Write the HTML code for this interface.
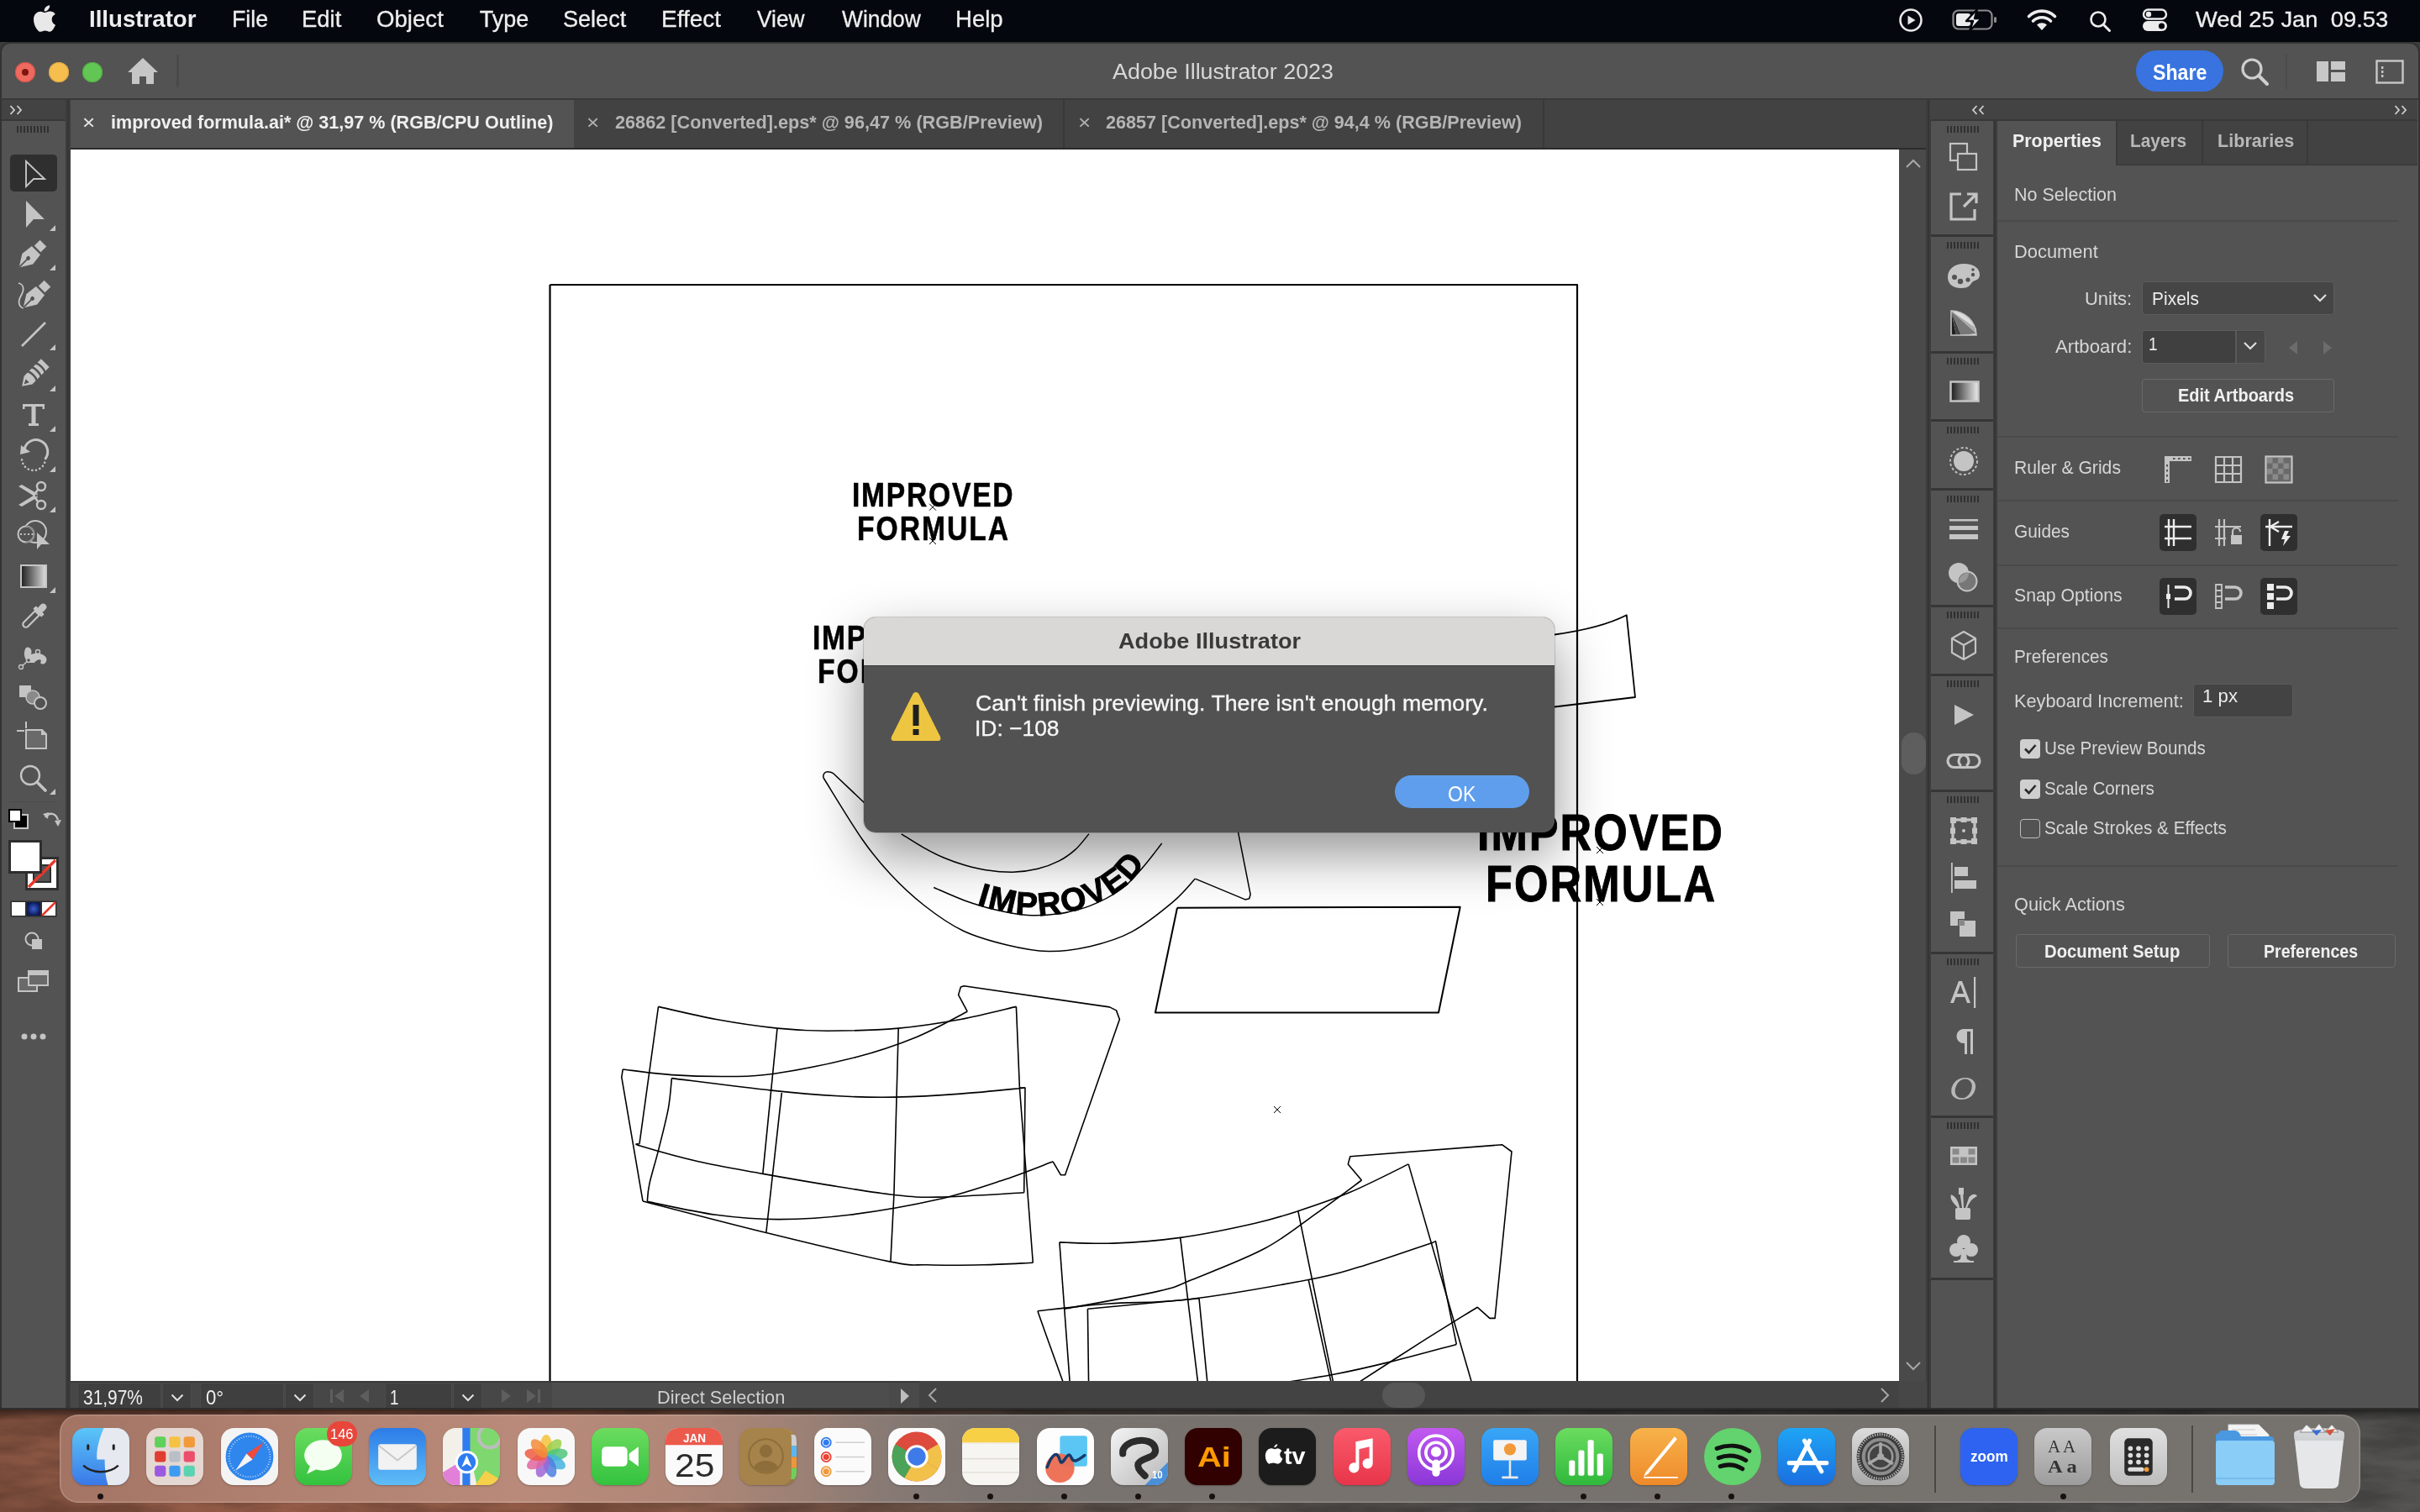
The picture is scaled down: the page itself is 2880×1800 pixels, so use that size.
<!DOCTYPE html>
<html><head><meta charset="utf-8">
<style>
*{margin:0;padding:0;box-sizing:border-box;}
html,body{width:2880px;height:1800px;overflow:hidden;}
body{position:relative;font-family:"Liberation Sans",sans-serif;background:#3c3c3c;}
.a{position:absolute;}
.t{position:absolute;white-space:pre;line-height:1;}
svg{position:absolute;overflow:visible;}

</style></head><body>
<div class="a" style="left:0;top:1590px;width:2880px;height:210px;background:linear-gradient(90deg,#6a4233 0%,#7a4b3b 12%,#704636 25%,#5a4237 35%,#4a423d 46%,#403e3c 60%,#3c3b3a 80%,#444342 100%)"></div>
<svg style="left:0;top:1590px;mix-blend-mode:overlay;opacity:0.55" width="2880" height="210"><filter id="wn" x="0" y="0" width="100%" height="100%"><feTurbulence type="fractalNoise" baseFrequency="0.012 0.05" numOctaves="4" seed="7"/><feColorMatrix type="matrix" values="0 0 0 0 0.5  0 0 0 0 0.5  0 0 0 0 0.5  2.2 0 0 0 -0.6"/></filter><rect width="2880" height="210" filter="url(#wn)"/></svg>
<div class="a" style="left:0px;top:0px;width:2880px;height:50px;background:#05070f;"></div>
<svg style="left:40px;top:6px" width="26" height="32" viewBox="16 12 139 173" preserveAspectRatio="none"><path fill="#e8e8e8" d="M150.4 72.3c-1 .8-18.3 10.5-18.3 32.3 0 25.2 22.1 34.1 22.8 34.3-.1.5-3.5 12.2-11.7 24.1-7.3 10.5-14.9 21-26.5 21s-14.6-6.7-28-6.7c-13.1 0-17.7 7-28.3 7s-18-9.7-26.5-21.6C24.1 149.1 16 126.8 16 105.7c0-34 22.1-52 43.8-52 11.6 0 21.2 7.6 28.4 7.6 6.9 0 17.7-8.1 30.9-8.1 5 0 22.9.5 34.7 17.1zM109.5 40.6c5.4-6.4 9.2-15.3 9.2-24.2 0-1.2-.1-2.5-.3-3.5-8.8.3-19.3 5.9-25.6 13.2-5 5.7-9.6 14.6-9.6 23.6 0 1.4.2 2.7.3 3.2.6.1 1.5.2 2.4.2 7.9 0 17.9-5.3 23.6-12.5z"/></svg>
<div class="t" style="left:106.48px;top:10.05px;font-size:27px;font-weight:700;font-style:normal;font-family:'Liberation Sans';color:#eeeeee;transform:scaleX(1.0241);transform-origin:0 0;">Illustrator</div>
<div class="t" style="left:276.01px;top:10.05px;font-size:27px;font-weight:400;font-style:normal;font-family:'Liberation Sans';color:#eeeeee;transform:scaleX(0.9928);transform-origin:0 0;-webkit-text-stroke:0.3px #eeeeee;">File</div>
<div class="t" style="left:358.97px;top:10.05px;font-size:27px;font-weight:400;font-style:normal;font-family:'Liberation Sans';color:#eeeeee;transform:scaleX(1.0172);transform-origin:0 0;-webkit-text-stroke:0.3px #eeeeee;">Edit</div>
<div class="t" style="left:448.48px;top:10.05px;font-size:27px;font-weight:400;font-style:normal;font-family:'Liberation Sans';color:#eeeeee;transform:scaleX(1.0228);transform-origin:0 0;-webkit-text-stroke:0.3px #eeeeee;">Object</div>
<div class="t" style="left:570.80px;top:10.05px;font-size:27px;font-weight:400;font-style:normal;font-family:'Liberation Sans';color:#eeeeee;-webkit-text-stroke:0.3px #eeeeee;">Type</div>
<div class="t" style="left:670.30px;top:10.05px;font-size:27px;font-weight:400;font-style:normal;font-family:'Liberation Sans';color:#eeeeee;transform:scaleX(1.0022);transform-origin:0 0;-webkit-text-stroke:0.3px #eeeeee;">Select</div>
<div class="t" style="left:787.43px;top:10.05px;font-size:27px;font-weight:400;font-style:normal;font-family:'Liberation Sans';color:#eeeeee;transform:scaleX(1.0367);transform-origin:0 0;-webkit-text-stroke:0.3px #eeeeee;">Effect</div>
<div class="t" style="left:901.00px;top:10.05px;font-size:27px;font-weight:400;font-style:normal;font-family:'Liberation Sans';color:#eeeeee;transform:scaleX(0.9738);transform-origin:0 0;-webkit-text-stroke:0.3px #eeeeee;">View</div>
<div class="t" style="left:1001.70px;top:10.05px;font-size:27px;font-weight:400;font-style:normal;font-family:'Liberation Sans';color:#eeeeee;transform:scaleX(0.9769);transform-origin:0 0;-webkit-text-stroke:0.3px #eeeeee;">Window</div>
<div class="t" style="left:1136.96px;top:10.05px;font-size:27px;font-weight:400;font-style:normal;font-family:'Liberation Sans';color:#eeeeee;transform:scaleX(1.0207);transform-origin:0 0;-webkit-text-stroke:0.3px #eeeeee;">Help</div>
<div class="t" style="left:2613.00px;top:10.20px;font-size:26px;font-weight:400;font-style:normal;font-family:'Liberation Sans';color:#eeeeee;transform:scaleX(1.0523);transform-origin:0 0;-webkit-text-stroke:0.3px #eeeeee;">Wed 25 Jan  09.53</div>
<svg style="left:2258px;top:9px" width="32" height="30"><circle cx="16" cy="15" r="12.5" fill="none" stroke="#e8e8e8" stroke-width="2.6"/><path d="M12.5 9.5 L21.5 15 L12.5 20.5Z" fill="#e8e8e8"/></svg>
<svg style="left:2323px;top:10px" width="56" height="28"><rect x="1.5" y="2.5" width="46" height="22" rx="6" fill="none" stroke="#8c8c8c" stroke-width="2.2"/><rect x="50" y="10" width="3" height="7" rx="1.5" fill="#8c8c8c"/><rect x="5" y="6" width="17" height="15" rx="3" fill="#ececec"/><path d="M30 1 L17 15 H25 L21 27 L35 12 H27 Z" fill="#ececec" stroke="#05070f" stroke-width="2.4" stroke-linejoin="round"/></svg>
<svg style="left:2412px;top:11px" width="36" height="26" viewBox="0 0 36 26"><path d="M18 25 L12 18.5 A9 9 0 0 1 24 18.5 Z" fill="#ececec"/><path d="M7.5 14 A15 15 0 0 1 28.5 14" fill="none" stroke="#ececec" stroke-width="3.6" stroke-linecap="round"/><path d="M2.5 8.5 A22 22 0 0 1 33.5 8.5" fill="none" stroke="#ececec" stroke-width="3.6" stroke-linecap="round"/></svg>
<svg style="left:2485px;top:12px" width="30" height="28"><circle cx="12" cy="11" r="8.5" fill="none" stroke="#ececec" stroke-width="2.6"/><path d="M18.5 17.5 L25.5 24.5" stroke="#ececec" stroke-width="3" stroke-linecap="round"/></svg>
<svg style="left:2549px;top:10px" width="32" height="28"><rect x="2" y="1.5" width="27" height="11" rx="5.5" fill="none" stroke="#ececec" stroke-width="2.4"/><circle cx="8" cy="7" r="3.2" fill="#ececec"/><rect x="1" y="15" width="29" height="12" rx="6" fill="#ececec"/><circle cx="23.5" cy="21" r="3.6" fill="#05070f"/></svg>
<div class="a" style="left:0;top:50px;width:2880px;height:1628px;background:#535353;border-radius:12px 12px 0 0;border:2px solid #333;border-bottom:0"></div>
<div class="a" style="left:18px;top:74px;width:24px;height:24px;border-radius:50%;background:#ee6a5f;box-shadow:inset 0 0 0 1px #d1524a"></div>
<div class="a" style="left:58px;top:74px;width:24px;height:24px;border-radius:50%;background:#f5be4f;box-shadow:inset 0 0 0 1px #d6a141"></div>
<div class="a" style="left:98px;top:74px;width:24px;height:24px;border-radius:50%;background:#62c655;box-shadow:inset 0 0 0 1px #52a843"></div>
<div class="a" style="left:26px;top:82px;width:8px;height:8px;border-radius:50%;background:#7e150e"></div>
<svg style="left:152px;top:69px" width="36" height="32"><path d="M18 0 L36 17 L31 17 L31 31 L22 31 L22 22 L14 22 L14 31 L5 31 L5 17 L0 17 Z" fill="#c6c6c6"/></svg>
<div class="a" style="left:210px;top:65px;width:3px;height:39px;background:#4a4a4a;"></div>
<div class="t" style="left:1323.80px;top:71.90px;font-size:26px;font-weight:400;font-style:normal;font-family:'Liberation Sans';color:#d8d8d8;transform:scaleX(1.0338);transform-origin:0 0;">Adobe Illustrator 2023</div>
<div class="a" style="left:2542px;top:59.5px;width:104px;height:49px;border-radius:25px;background:#3873e0"></div>
<div class="t" style="left:2562.00px;top:72.90px;font-size:26px;font-weight:700;font-style:normal;font-family:'Liberation Sans';color:#ffffff;transform:scaleX(0.8913);transform-origin:0 0;">Share</div>
<svg style="left:2665px;top:67px" width="40" height="38"><circle cx="15" cy="15" r="11" fill="none" stroke="#cfcfcf" stroke-width="3.2"/><path d="M23 23 L33 33" stroke="#cfcfcf" stroke-width="4" stroke-linecap="round"/></svg>
<div class="a" style="left:2720px;top:64px;width:2px;height:42px;background:#4b4b4b;"></div>
<svg style="left:2757px;top:73px" width="36" height="26"><rect x="0" y="0" width="14" height="24" fill="#c8c8c8"/><rect x="17" y="0" width="17" height="10" fill="#c8c8c8"/><rect x="17" y="13" width="17" height="11" fill="#c8c8c8"/></svg>
<svg style="left:2827px;top:71px" width="36" height="30"><rect x="1.5" y="1.5" width="31" height="26" fill="none" stroke="#c8c8c8" stroke-width="2.4"/><rect x="7" y="8" width="2.4" height="3" fill="#c8c8c8"/><rect x="7" y="13" width="2.4" height="3" fill="#c8c8c8"/><rect x="7" y="18" width="2.4" height="3" fill="#c8c8c8"/></svg>
<div class="a" style="left:83px;top:118px;width:2210px;height:60px;background:#424242;"></div>
<div class="a" style="left:83px;top:118px;width:600px;height:59px;background:#535353;"></div>
<div class="a" style="left:1265px;top:118px;width:2px;height:59px;background:#383838;"></div>
<div class="a" style="left:1836px;top:118px;width:2px;height:59px;background:#383838;"></div>
<div class="a" style="left:83px;top:176px;width:2210px;height:2px;background:#2b2b2b;"></div>
<div class="t" style="left:98.22px;top:133.60px;font-size:24px;font-weight:400;font-style:normal;font-family:'Liberation Sans';color:#e6e6e6;transform:scaleX(1.0833);transform-origin:0 0;">×</div>
<div class="t" style="left:131.62px;top:135.40px;font-size:22px;font-weight:700;font-style:normal;font-family:'Liberation Sans';color:#f0f0f0;transform:scaleX(0.9795);transform-origin:0 0;">improved formula.ai* @ 31,97 % (RGB/CPU Outline)</div>
<div class="t" style="left:697.92px;top:133.60px;font-size:24px;font-weight:400;font-style:normal;font-family:'Liberation Sans';color:#b0b0b0;transform:scaleX(1.0833);transform-origin:0 0;">×</div>
<div class="t" style="left:732.00px;top:135.40px;font-size:22px;font-weight:700;font-style:normal;font-family:'Liberation Sans';color:#b5b5b5;transform:scaleX(0.9850);transform-origin:0 0;">26862 [Converted].eps* @ 96,47 % (RGB/Preview)</div>
<div class="t" style="left:1282.52px;top:133.60px;font-size:24px;font-weight:400;font-style:normal;font-family:'Liberation Sans';color:#b0b0b0;transform:scaleX(1.0833);transform-origin:0 0;">×</div>
<div class="t" style="left:1316.00px;top:135.40px;font-size:22px;font-weight:700;font-style:normal;font-family:'Liberation Sans';color:#b5b5b5;transform:scaleX(0.9814);transform-origin:0 0;">26857 [Converted].eps* @ 94,4 % (RGB/Preview)</div>
<div class="a" style="left:84px;top:178px;width:2176px;height:1466px;background:#fff;overflow:hidden">
<svg style="left:-84px;top:-178px" width="2880" height="1800" viewBox="0 0 2880 1800"><path d="M654.5 339 H1877 V1700 M654.5 339 V1700" fill="none" stroke="#000" stroke-width="2.2" stroke-linejoin="round"/><path d="M980.0 926.0 C987.7 938.2 1012.7 979.8 1026.0 999.0 C1039.3 1018.2 1047.7 1027.8 1060.0 1041.0 C1072.3 1054.2 1085.7 1066.8 1100.0 1078.0 C1114.3 1089.2 1129.6 1100.2 1146.0 1108.0 C1162.4 1115.8 1181.5 1120.9 1198.4 1125.0 C1215.3 1129.1 1231.0 1132.2 1247.5 1132.5 C1264.0 1132.8 1280.6 1130.5 1297.1 1126.7 C1313.6 1122.9 1330.2 1118.3 1346.7 1109.4 C1363.2 1100.5 1383.7 1084.0 1396.3 1073.4 C1408.9 1062.9 1418.1 1050.6 1422.4 1046.1" fill="none" stroke="#000" stroke-width="1.5" stroke-linejoin="round"/><path d="M1422.4 1046.1 L1481.9 1070.9 L1486.8 1069.7 L1488.1 1064.7 L1473.2 989.1" fill="none" stroke="#000" stroke-width="1.5" stroke-linejoin="round"/><path d="M980 926 C979 921 982 918 987 919 C989 919 990 920 992 921 L1030 957" fill="none" stroke="#000" stroke-width="1.5" stroke-linejoin="round"/><path d="M1072.7 992.8 C1077.1 995.5 1090.3 1004.2 1098.8 1008.9 C1107.2 1013.7 1115.3 1017.8 1123.6 1021.3 C1131.8 1024.8 1140.1 1027.6 1148.4 1030.0 C1156.6 1032.4 1163.7 1034.4 1173.2 1035.7 C1182.7 1037.1 1195.1 1038.4 1205.4 1038.2 C1215.7 1037.9 1226.1 1036.4 1235.1 1034.2 C1244.2 1032.0 1252.5 1028.9 1259.9 1025.1 C1267.4 1021.3 1273.8 1016.8 1279.8 1011.4 C1285.8 1006.0 1293.2 995.9 1295.9 992.8" fill="none" stroke="#000" stroke-width="1.5" stroke-linejoin="round"/><path d="M1111.2 1056.5 C1117.4 1059.1 1136.0 1067.7 1148.4 1072.2 C1160.8 1076.6 1173.2 1080.4 1185.6 1083.3 C1198.0 1086.2 1210.4 1088.8 1222.7 1089.5 C1235.1 1090.3 1247.5 1089.6 1259.9 1087.8 C1272.3 1085.9 1284.7 1083.2 1297.1 1078.4 C1309.5 1073.5 1324.0 1066.0 1334.3 1058.5 C1344.7 1051.1 1351.1 1042.8 1359.1 1033.7 C1367.2 1024.6 1378.8 1008.9 1382.7 1004.0" fill="none" stroke="#000" stroke-width="1.5" stroke-linejoin="round"/><path d="M1850 755.5 Q1905 748 1935.8 732.3 L1946 830 L1850 841.5" fill="none" stroke="#000" stroke-width="1.8" stroke-linejoin="round"/><path d="M1401.0 1080.7 L1737.7 1079.8 L1712.0 1205.5 L1374.9 1205.5 L1401.0 1080.7" fill="none" stroke="#000" stroke-width="2.0" stroke-linejoin="round"/><path d="M783.5 1198.4 C795.0 1200.9 828.7 1209.2 852.3 1213.5 C875.9 1217.8 903.0 1221.8 925.0 1224.1 C947.1 1226.4 960.5 1227.2 984.6 1227.2 C1008.6 1227.2 1042.8 1226.4 1069.2 1224.1 C1095.7 1221.8 1119.9 1217.8 1143.3 1213.5 C1166.6 1209.2 1198.4 1200.9 1209.4 1198.4" fill="none" stroke="#000" stroke-width="1.6" stroke-linejoin="round"/><path d="M761.0 1361.6 C761.2 1362.1 750.6 1360.8 762.3 1364.3 C774.0 1367.8 806.9 1377.3 831.1 1382.8 C855.4 1388.3 882.3 1392.7 907.8 1397.4 C933.4 1402.0 958.5 1406.4 984.6 1410.6 C1010.6 1414.8 1041.9 1420.1 1063.9 1422.5 C1086.0 1424.9 1091.0 1425.6 1116.8 1425.1 C1142.6 1424.7 1201.7 1420.7 1218.7 1419.8" fill="none" stroke="#000" stroke-width="1.6" stroke-linejoin="round"/><path d="M741.2 1273.0 C750.9 1274.1 778.2 1278.2 799.4 1279.6 C820.5 1281.0 847.9 1281.7 868.1 1281.5 C888.4 1281.3 895.9 1282.1 921.1 1278.3 C946.2 1274.5 990.7 1265.7 1018.9 1258.5 C1047.2 1251.2 1068.3 1243.7 1090.4 1234.7 C1112.4 1225.6 1141.1 1209.3 1151.2 1204.2" fill="none" stroke="#000" stroke-width="1.6" stroke-linejoin="round"/><path d="M1253.1 1382.8 C1243.6 1386.3 1218.9 1396.5 1196.2 1404.0 C1173.5 1411.5 1147.7 1420.7 1116.8 1427.8 C1086.0 1434.8 1042.8 1442.3 1011.0 1446.3 C979.3 1450.3 952.8 1451.6 926.3 1451.6 C899.9 1451.6 878.3 1449.8 852.3 1446.3 C826.3 1442.8 783.9 1433.1 770.3 1430.4" fill="none" stroke="#000" stroke-width="1.6" stroke-linejoin="round"/><path d="M765.0 1429.9 C789.4 1436.2 862.9 1455.5 911.8 1467.5 C960.7 1479.5 1026.7 1495.5 1058.6 1501.9 C1090.6 1508.2 1085.1 1505.2 1103.6 1505.8 C1122.1 1506.5 1148.8 1506.3 1169.7 1505.8 C1190.7 1505.4 1219.3 1503.6 1229.3 1503.2" fill="none" stroke="#000" stroke-width="1.6" stroke-linejoin="round"/><path d="M799.4 1283.6 C819.2 1286.0 885.3 1294.6 918.4 1298.1 C951.5 1301.7 973.5 1303.4 997.8 1304.8 C1022.0 1306.1 1039.7 1306.5 1063.9 1306.1 C1088.2 1305.6 1117.3 1304.0 1143.3 1302.1 C1169.3 1300.3 1207.2 1296.2 1220.0 1295.0" fill="none" stroke="#000" stroke-width="1.6" stroke-linejoin="round"/><path d="M799.4 1283.6 C798.7 1289.6 798.0 1305.0 795.4 1319.3 C792.8 1333.6 787.2 1354.6 783.5 1369.6 C779.7 1384.6 775.1 1399.1 772.9 1409.3 C770.7 1419.4 770.7 1426.9 770.3 1430.4" fill="none" stroke="#000" stroke-width="1.6" stroke-linejoin="round"/><path d="M783.5 1198.4 L761.0 1361.6" fill="none" stroke="#000" stroke-width="1.6" stroke-linejoin="round"/><path d="M1209.4 1198.4 L1213.4 1295.0 L1229.3 1503.2" fill="none" stroke="#000" stroke-width="1.6" stroke-linejoin="round"/><path d="M925.0 1224.1 L907.8 1397.4" fill="none" stroke="#000" stroke-width="1.6" stroke-linejoin="round"/><path d="M1069.2 1224.1 L1063.9 1422.5 L1059.9 1501.9" fill="none" stroke="#000" stroke-width="1.6" stroke-linejoin="round"/><path d="M1151.2 1204.2 L1140.6 1184.4 L1143.3 1175.1 L1147.2 1173.8 L1320.5 1198.9 L1328.5 1202.9 L1332.4 1213.5 L1267.6 1398.7 L1262.3 1398.7 L1253.1 1382.8" fill="none" stroke="#000" stroke-width="1.6" stroke-linejoin="round"/><path d="M741.2 1273.0 L739.8 1282.3 L765.0 1429.9" fill="none" stroke="#000" stroke-width="1.6" stroke-linejoin="round"/><path d="M930.3 1300.8 L911.8 1467.5" fill="none" stroke="#000" stroke-width="1.6" stroke-linejoin="round"/><path d="M1213.4 1295.0 L1220.0 1295.0 L1218.7 1419.8" fill="none" stroke="#000" stroke-width="1.6" stroke-linejoin="round"/><path d="M1260.9 1478.9 C1271.5 1479.1 1300.2 1481.0 1324.1 1480.1 C1348.1 1479.2 1376.6 1477.3 1404.7 1473.4 C1432.8 1469.5 1469.4 1461.8 1492.7 1456.5 C1516.1 1451.2 1525.8 1447.9 1544.8 1441.7 C1563.8 1435.5 1584.9 1428.6 1606.8 1419.3 C1628.7 1410.0 1664.7 1391.5 1676.2 1385.9" fill="none" stroke="#000" stroke-width="1.6" stroke-linejoin="round"/><path d="M1234.9 1560.7 C1248.9 1559.2 1289.4 1554.3 1319.2 1552.0 C1348.9 1549.7 1373.7 1551.8 1413.4 1547.0 C1453.1 1542.3 1523.3 1529.9 1557.2 1523.5 C1591.1 1517.1 1591.9 1516.0 1616.7 1508.6 C1641.5 1501.2 1691.1 1483.8 1706.0 1478.9" fill="none" stroke="#000" stroke-width="1.6" stroke-linejoin="round"/><path d="M1294.4 1558.2 L1427.0 1545.8" fill="none" stroke="#000" stroke-width="1.6" stroke-linejoin="round"/><path d="M1267.1 1558.2 C1285.7 1554.7 1353.5 1542.9 1378.7 1537.1 C1403.9 1531.3 1397.3 1532.0 1418.4 1523.5 C1439.4 1515.0 1480.4 1499.5 1505.1 1486.3 C1529.9 1473.1 1547.9 1457.7 1567.1 1444.1 C1586.4 1430.6 1611.6 1411.5 1620.4 1405.0" fill="none" stroke="#000" stroke-width="1.6" stroke-linejoin="round"/><path d="M1758.1 1556.2 C1746.9 1563.2 1715.1 1582.7 1691.1 1597.9 C1667.1 1613.1 1627.1 1639.2 1614.2 1647.5" fill="none" stroke="#000" stroke-width="1.6" stroke-linejoin="round"/><path d="M1733.3 1600.4 C1720.0 1603.9 1678.3 1615.4 1653.9 1621.4 C1629.5 1627.4 1609.7 1632.0 1587.0 1636.3 C1564.2 1640.6 1529.1 1645.6 1517.5 1647.5" fill="none" stroke="#000" stroke-width="1.6" stroke-linejoin="round"/><path d="M1260.9 1478.9 L1273.3 1647.5" fill="none" stroke="#000" stroke-width="1.6" stroke-linejoin="round"/><path d="M1404.7 1473.4 L1425.8 1647.5" fill="none" stroke="#000" stroke-width="1.6" stroke-linejoin="round"/><path d="M1544.8 1441.7 L1587.0 1647.5" fill="none" stroke="#000" stroke-width="1.6" stroke-linejoin="round"/><path d="M1676.2 1385.9 L1751.9 1647.5" fill="none" stroke="#000" stroke-width="1.6" stroke-linejoin="round"/><path d="M1234.9 1560.7 L1243.6 1585.5 L1265.9 1647.5" fill="none" stroke="#000" stroke-width="1.6" stroke-linejoin="round"/><path d="M1294.4 1558.2 L1295.6 1647.5" fill="none" stroke="#000" stroke-width="1.6" stroke-linejoin="round"/><path d="M1427.0 1545.8 L1437.0 1647.5" fill="none" stroke="#000" stroke-width="1.6" stroke-linejoin="round"/><path d="M1557.2 1523.5 L1584.5 1647.5" fill="none" stroke="#000" stroke-width="1.6" stroke-linejoin="round"/><path d="M1706.0 1478.9 L1708.5 1477.6 L1733.3 1600.4" fill="none" stroke="#000" stroke-width="1.6" stroke-linejoin="round"/><path d="M1620.4 1405.0 L1604.3 1385.9 L1606.8 1376.7 L1787.8 1362.8 L1799.0 1371.0 L1779.1 1569.4 L1772.9 1569.4 L1758.1 1556.2" fill="none" stroke="#000" stroke-width="1.6" stroke-linejoin="round"/><path d="M1106 599.7 L1114 607.7 M1114 599.7 L1106 607.7" stroke="#000" stroke-width="1"/><path d="M1106 640 L1114 648 M1114 640 L1106 648" stroke="#000" stroke-width="1"/><path d="M1900 1008 L1908 1016 M1908 1008 L1900 1016" stroke="#000" stroke-width="1"/><path d="M1900 1070 L1908 1078 M1908 1070 L1900 1078" stroke="#000" stroke-width="1"/><path d="M1516 1317 L1524 1325 M1524 1317 L1516 1325" stroke="#000" stroke-width="1"/></svg>
</div>
<div class="t" style="left:1014.12px;top:569.00px;font-size:40px;font-weight:700;font-style:normal;font-family:'Liberation Sans';color:#000;transform:scaleX(0.8400);transform-origin:0 0;-webkit-text-stroke:0.6px #000;letter-spacing:2.11px;">IMPROVED</div>
<div class="t" style="left:1020.32px;top:609.00px;font-size:40px;font-weight:700;font-style:normal;font-family:'Liberation Sans';color:#000;transform:scaleX(0.8400);transform-origin:0 0;-webkit-text-stroke:0.6px #000;letter-spacing:2.37px;">FORMULA</div>
<div class="t" style="left:967.12px;top:739.00px;font-size:40px;font-weight:700;font-style:normal;font-family:'Liberation Sans';color:#000;transform:scaleX(0.8400);transform-origin:0 0;-webkit-text-stroke:0.6px #000;letter-spacing:2.11px;">IMPROVED</div>
<div class="t" style="left:973.32px;top:779.00px;font-size:40px;font-weight:700;font-style:normal;font-family:'Liberation Sans';color:#000;transform:scaleX(0.8400);transform-origin:0 0;-webkit-text-stroke:0.6px #000;letter-spacing:2.37px;">FORMULA</div>
<div class="t" style="left:1757.64px;top:960.30px;font-size:62px;font-weight:700;font-style:normal;font-family:'Liberation Sans';color:#000;transform:scaleX(0.8400);transform-origin:0 0;-webkit-text-stroke:1px #000;letter-spacing:2.39px;">IMPROVED</div>
<div class="t" style="left:1768.34px;top:1020.80px;font-size:62px;font-weight:700;font-style:normal;font-family:'Liberation Sans';color:#000;transform:scaleX(0.8400);transform-origin:0 0;-webkit-text-stroke:1px #000;letter-spacing:2.51px;">FORMULA</div>
<svg style="left:0;top:0" width="2880" height="1800"><defs><path id="tp1" d="M1111.2 1056.5 C1117.4 1059.1 1136.0 1067.7 1148.4 1072.2 C1160.8 1076.6 1173.2 1080.4 1185.6 1083.3 C1198.0 1086.2 1210.4 1088.8 1222.7 1089.5 C1235.1 1090.3 1247.5 1089.6 1259.9 1087.8 C1272.3 1085.9 1284.7 1083.2 1297.1 1078.4 C1309.5 1073.5 1324.0 1066.0 1334.3 1058.5 C1344.7 1051.1 1351.1 1042.8 1359.1 1033.7 C1367.2 1024.6 1378.8 1008.9 1382.7 1004.0"/></defs><text font-family="Liberation Sans" font-weight="700" font-size="39" fill="#000" stroke="#000" stroke-width="0.9" letter-spacing="1.9"><textPath href="#tp1" startOffset="55">IMPROVED</textPath></text></svg>
<div class="a" style="left:2px;top:119px;width:76px;height:1558px;background:#535353;"></div>
<div class="a" style="left:2px;top:119px;width:76px;height:23px;background:#434343;"></div>
<div class="a" style="left:2px;top:142px;width:76px;height:2px;background:#383838;"></div>
<div class="a" style="left:78px;top:119px;width:6px;height:1558px;background:#3d3d3d;"></div>
<div class="a" style="left:80px;top:119px;width:2px;height:1558px;background:#363636;"></div>
<div class="a" style="left:1px;top:117px;width:2878px;height:2px;background:#383838;"></div>
<svg style="left:11px;top:125px" width="16" height="12"><path d="M1.5 1 L6 6 L1.5 11 M9.5 1 L14 6 L9.5 11" fill="none" stroke="#cfcfcf" stroke-width="1.8"/></svg>
<svg style="left:20px;top:150px" width="40" height="8"><rect x="0" y="0" width="2" height="8" fill="#303030"/><rect x="4" y="0" width="2" height="8" fill="#303030"/><rect x="8" y="0" width="2" height="8" fill="#303030"/><rect x="12" y="0" width="2" height="8" fill="#303030"/><rect x="16" y="0" width="2" height="8" fill="#303030"/><rect x="20" y="0" width="2" height="8" fill="#303030"/><rect x="24" y="0" width="2" height="8" fill="#303030"/><rect x="28" y="0" width="2" height="8" fill="#303030"/><rect x="32" y="0" width="2" height="8" fill="#303030"/><rect x="36" y="0" width="2" height="8" fill="#303030"/></svg>
<div class="a" style="left:12px;top:184px;width:56px;height:44px;border-radius:5px;background:#2f2f2f"></div>
<svg style="left:25.0px;top:189.0px" width="30" height="36" viewBox="0 0 30 36"><path d="M6 3 L6 33 L15 24 L28 24 Z" fill="none" stroke="#c4c4c4" stroke-width="1.9" stroke-linejoin="miter"/></svg>
<svg style="left:25.0px;top:237.0px" width="30" height="36" viewBox="0 0 30 36"><path d="M6 2 L6 34 L15 24 L28 24 Z" fill="#c4c4c4"/></svg>
<svg style="left:59px;top:267.5px" width="7" height="7"><path d="M7 0 L7 7 L0 7Z" fill="#c4c4c4"/></svg>
<svg style="left:15.299999999999997px;top:281.8px" width="44" height="44" viewBox="0 0 44 44"><g transform="translate(22 22) rotate(45) scale(1.2) translate(-17.5 -17)"><rect x="13" y="0" width="9" height="8" fill="#c4c4c4"/><path d="M11.5 10 L23.5 10 L25 22 L17.5 34 L10 22 Z" fill="#c4c4c4"/><circle cx="17.5" cy="21" r="2" fill="#535353"/><path d="M17.5 21 L17.5 34" stroke="#535353" stroke-width="1.4"/></g></svg>
<svg style="left:59px;top:314.5px" width="7" height="7"><path d="M7 0 L7 7 L0 7Z" fill="#c4c4c4"/></svg>
<svg style="left:16.0px;top:333.0px" width="44" height="40" viewBox="0 0 44 40"><path d="M6 4 C13 6 13 12 9 19 C5 26 6 32 12 34" fill="none" stroke="#c4c4c4" stroke-width="1.8"/><g transform="translate(26 19) rotate(45) scale(1.2) translate(-17.5 -17)"><rect x="13" y="0" width="9" height="8" fill="#c4c4c4"/><path d="M11.5 10 L23.5 10 L25 22 L17.5 34 L10 22 Z" fill="#c4c4c4"/><circle cx="17.5" cy="21" r="2" fill="#535353"/><path d="M17.5 21 L17.5 34" stroke="#535353" stroke-width="1.4"/></g></svg>
<svg style="left:23.0px;top:381.0px" width="34" height="34" viewBox="0 0 34 34"><path d="M3 31 L31 3" stroke="#c4c4c4" stroke-width="2.6"/></svg>
<svg style="left:59px;top:409.5px" width="7" height="7"><path d="M7 0 L7 7 L0 7Z" fill="#c4c4c4"/></svg>
<svg style="left:20.0px;top:426.0px" width="40" height="40" viewBox="0 0 40 40"><g transform="translate(20 20) rotate(45) scale(1.15) translate(-17 -17)"><path d="M11 0 L23 0 L23 25 L17 34 L11 25Z" fill="#c4c4c4"/><path d="M10 7 C14 5 20 5 24 7 M10 13 C14 11 20 11 24 13 M10 19 C14 17 20 17 24 19" fill="none" stroke="#535353" stroke-width="2.2"/><path d="M14.5 26 L19.5 26 L17 31Z" fill="#535353"/></g></svg>
<svg style="left:59px;top:458.5px" width="7" height="7"><path d="M7 0 L7 7 L0 7Z" fill="#c4c4c4"/></svg>
<svg style="left:24.0px;top:479.0px" width="32" height="30" viewBox="0 0 32 30"><path d="M3 2 H29 V8 H26.5 V5 H18.5 V25 H22 V28 H10 V25 H13.5 V5 H5.5 V8 H3 Z" fill="#c4c4c4"/></svg>
<svg style="left:59px;top:506.5px" width="7" height="7"><path d="M7 0 L7 7 L0 7Z" fill="#c4c4c4"/></svg>
<svg style="left:20.0px;top:522.0px" width="40" height="40" viewBox="0 0 40 40"><path d="M9 13 A14 14 0 1 1 34 24" fill="none" stroke="#c4c4c4" stroke-width="3"/><path d="M5 8 L16 16 L4 19Z" fill="#c4c4c4"/><path d="M34 24 A14 14 0 0 1 6 24" fill="none" stroke="#c4c4c4" stroke-width="2.6" stroke-dasharray="0.1 4.6" stroke-linecap="round"/></svg>
<svg style="left:59px;top:554.5px" width="7" height="7"><path d="M7 0 L7 7 L0 7Z" fill="#c4c4c4"/></svg>
<svg style="left:20.0px;top:572.0px" width="40" height="36" viewBox="0 0 40 36"><circle cx="29" cy="7" r="5" fill="none" stroke="#c4c4c4" stroke-width="2.4"/><circle cx="29" cy="29" r="5" fill="none" stroke="#c4c4c4" stroke-width="2.4"/><path d="M2 7 L6 5 L25 16 L23 20 Z M2 29 L6 31 L25 20 L23 16Z" fill="#c4c4c4"/><path d="M20 18 L25 11 M20 18 L25 25" stroke="#c4c4c4" stroke-width="2.6"/></svg>
<svg style="left:59px;top:602.5px" width="7" height="7"><path d="M7 0 L7 7 L0 7Z" fill="#c4c4c4"/></svg>
<svg style="left:18.0px;top:619.0px" width="44" height="36" viewBox="0 0 44 36"><circle cx="24" cy="14" r="13" fill="none" stroke="#c4c4c4" stroke-width="2"/><circle cx="13" cy="17" r="9.5" fill="#535353" stroke="#c4c4c4" stroke-width="2"/><path d="M13 7.5 A9.5 9.5 0 0 1 13 26.5" fill="none" stroke="#888" stroke-width="1.6"/><path d="M6 17 H24" stroke="#c4c4c4" stroke-width="2" stroke-dasharray="2 2.5"/><path d="M26 15 L41 29 L31 29 L26 35Z" fill="#c4c4c4"/></svg>
<svg style="left:24px;top:672px" width="32" height="28"><defs><linearGradient id="tg1"><stop offset="0" stop-color="#1e1e1e"/><stop offset="1" stop-color="#e0e0e0"/></linearGradient></defs><rect x="1" y="1" width="30" height="26" fill="url(#tg1)" stroke="#c4c4c4" stroke-width="2"/></svg>
<svg style="left:59px;top:698.5px" width="7" height="7"><path d="M7 0 L7 7 L0 7Z" fill="#c4c4c4"/></svg>
<svg style="left:19.5px;top:714.0px" width="40" height="40" viewBox="0 0 40 40"><g transform="translate(20 20) rotate(45) translate(-7 -20)"><rect x="3" y="0" width="8" height="11" rx="4" fill="#c4c4c4"/><rect x="0" y="9" width="14" height="5" rx="1" fill="#c4c4c4"/><path d="M3.5 14 H10.5 V33 A3.5 3.5 0 0 1 3.5 33 Z" fill="none" stroke="#c4c4c4" stroke-width="2.2"/></g></svg>
<svg style="left:21.0px;top:767.0px" width="38" height="30" viewBox="0 0 38 30"><path d="M10 4 C14 2 18 6 16 12 C22 10 30 10 34 16 C36 22 30 26 27 22 C30 18 24 16 20 22 L13 22 C8 18 6 10 10 4Z" fill="#c4c4c4"/><path d="M4 27 L24 9" stroke="#c4c4c4" stroke-width="1.6"/><circle cx="4" cy="27" r="2.5" fill="#535353" stroke="#c4c4c4" stroke-width="1.4"/><circle cx="13" cy="19" r="2.5" fill="#535353" stroke="#c4c4c4" stroke-width="1.4"/><circle cx="24" cy="9" r="2.5" fill="#535353" stroke="#c4c4c4" stroke-width="1.4"/></svg>
<svg style="left:21.0px;top:814.0px" width="38" height="32" viewBox="0 0 38 32"><rect x="2" y="2" width="14" height="14" fill="#c4c4c4"/><circle cx="18" cy="16" r="8" fill="#8a8a8a" stroke="#c4c4c4" stroke-width="1.5"/><circle cx="27" cy="23" r="7" fill="#535353" stroke="#c4c4c4" stroke-width="2"/></svg>
<svg style="left:20.0px;top:858.0px" width="40" height="36" viewBox="0 0 40 36"><path d="M11 1 V9 M0 12 H9" stroke="#c4c4c4" stroke-width="2"/><path d="M11 11 H30 L35 16 V33 H11Z" fill="#6a6a6a" stroke="#c4c4c4" stroke-width="2"/><path d="M29 11 L35 17 L29 17Z" fill="#c4c4c4"/></svg>
<svg style="left:22.0px;top:909.0px" width="36" height="34" viewBox="0 0 36 34"><circle cx="14" cy="14" r="11" fill="none" stroke="#c4c4c4" stroke-width="2.4"/><path d="M22 22 L32 32" stroke="#c4c4c4" stroke-width="3.6" stroke-linecap="round"/></svg>
<svg style="left:59px;top:938.5px" width="7" height="7"><path d="M7 0 L7 7 L0 7Z" fill="#c4c4c4"/></svg>
<div class="a" style="left:12px;top:954px;width:56px;height:1px;background:#4a4a4a;"></div>
<svg style="left:10px;top:963px" width="26" height="26"><rect x="7" y="7" width="16" height="16" fill="#000" stroke="#c4c4c4" stroke-width="2"/><rect x="1" y="1" width="14" height="14" fill="#fff" stroke="#000" stroke-width="2"/></svg>
<svg style="left:50px;top:964px" width="26" height="26"><path d="M4 9 C8 3 16 3 19 12" fill="none" stroke="#c4c4c4" stroke-width="2.4"/><path d="M1 5 L8 3 L7 11Z M15 13 L23 12 L19 20Z" fill="#c4c4c4"/></svg>
<svg style="left:30px;top:1020px" width="40" height="40"><rect x="1.5" y="1.5" width="37" height="37" fill="#fff" stroke="#2e2e2e" stroke-width="3"/><rect x="10" y="10" width="20" height="20" fill="#535353" stroke="#2e2e2e" stroke-width="2"/><path d="M4 36 L36 4" stroke="#e8382b" stroke-width="3.5"/></svg>
<svg style="left:10px;top:1000px" width="40" height="40"><rect x="1.5" y="1.5" width="37" height="37" fill="#fff" stroke="#2e2e2e" stroke-width="3"/></svg>
<svg style="left:12px;top:1072px" width="56" height="20"><rect x="0.5" y="0.5" width="55" height="19" fill="#2e2e2e"/><rect x="2" y="2" width="16" height="16" fill="#fff"/><defs><radialGradient id="bg1"><stop offset="0" stop-color="#3b5fd0"/><stop offset="1" stop-color="#0b1a5a"/></radialGradient></defs><rect x="20" y="2" width="16" height="16" fill="url(#bg1)"/><rect x="38" y="2" width="16" height="16" fill="#fff"/><path d="M38 18 L54 2" stroke="#e8382b" stroke-width="2.5"/></svg>
<svg style="left:29px;top:1109px" width="22" height="22"><circle cx="9" cy="9" r="7.5" fill="none" stroke="#c4c4c4" stroke-width="2"/><rect x="9" y="9" width="12" height="12" fill="#c4c4c4"/></svg>
<svg style="left:21px;top:1154px" width="38" height="28"><rect x="1" y="10" width="22" height="16" fill="#6a6a6a" stroke="#c4c4c4" stroke-width="2"/><rect x="13" y="2" width="23" height="17" fill="#6a6a6a" stroke="#c4c4c4" stroke-width="2"/><rect x="13" y="2" width="23" height="5" fill="#c4c4c4"/></svg>
<svg style="left:25px;top:1229px" width="30" height="10"><circle cx="4" cy="5" r="3.5" fill="#c4c4c4"/><circle cx="15" cy="5" r="3.5" fill="#c4c4c4"/><circle cx="26" cy="5" r="3.5" fill="#c4c4c4"/></svg>
<div class="a" style="left:2260px;top:178px;width:33px;height:1466px;background:#4a4a4a;"></div>
<svg style="left:2268px;top:189px" width="18" height="11"><path d="M1 10 L9 2 L17 10" fill="none" stroke="#a8a8a8" stroke-width="2"/></svg>
<svg style="left:2268px;top:1621px" width="18" height="11"><path d="M1 1 L9 9 L17 1" fill="none" stroke="#a8a8a8" stroke-width="2"/></svg>
<div class="a" style="left:2263px;top:872px;width:29px;height:50px;border-radius:14px;background:#5e5e5e"></div>
<div class="a" style="left:2292px;top:119px;width:6px;height:1558px;background:#3d3d3d;"></div>
<div class="a" style="left:2294px;top:119px;width:2px;height:1558px;background:#353535;"></div>
<div class="a" style="left:2297px;top:119px;width:580px;height:23px;background:#434343;"></div>
<div class="a" style="left:2297px;top:142px;width:580px;height:2px;background:#383838;"></div>
<svg style="left:2346px;top:125px" width="16" height="12"><path d="M6.5 1 L2 6 L6.5 11 M14.5 1 L10 6 L14.5 11" fill="none" stroke="#cfcfcf" stroke-width="1.8"/></svg>
<svg style="left:2849px;top:125px" width="16" height="12"><path d="M1.5 1 L6 6 L1.5 11 M9.5 1 L14 6 L9.5 11" fill="none" stroke="#cfcfcf" stroke-width="1.8"/></svg>
<div class="a" style="left:2298px;top:144px;width:74px;height:1533px;background:#535353;"></div>
<div class="a" style="left:2372px;top:144px;width:5px;height:1533px;background:#3d3d3d;"></div>
<div class="a" style="left:2373px;top:144px;width:2px;height:1533px;background:#363636;"></div>
<svg style="left:2317px;top:149.6px" width="40" height="8"><rect x="0" y="0" width="2" height="8" fill="#303030"/><rect x="4" y="0" width="2" height="8" fill="#303030"/><rect x="8" y="0" width="2" height="8" fill="#303030"/><rect x="12" y="0" width="2" height="8" fill="#303030"/><rect x="16" y="0" width="2" height="8" fill="#303030"/><rect x="20" y="0" width="2" height="8" fill="#303030"/><rect x="24" y="0" width="2" height="8" fill="#303030"/><rect x="28" y="0" width="2" height="8" fill="#303030"/><rect x="32" y="0" width="2" height="8" fill="#303030"/><rect x="36" y="0" width="2" height="8" fill="#303030"/></svg>
<svg style="left:2317px;top:288px" width="40" height="8"><rect x="0" y="0" width="2" height="8" fill="#303030"/><rect x="4" y="0" width="2" height="8" fill="#303030"/><rect x="8" y="0" width="2" height="8" fill="#303030"/><rect x="12" y="0" width="2" height="8" fill="#303030"/><rect x="16" y="0" width="2" height="8" fill="#303030"/><rect x="20" y="0" width="2" height="8" fill="#303030"/><rect x="24" y="0" width="2" height="8" fill="#303030"/><rect x="28" y="0" width="2" height="8" fill="#303030"/><rect x="32" y="0" width="2" height="8" fill="#303030"/><rect x="36" y="0" width="2" height="8" fill="#303030"/></svg>
<svg style="left:2317px;top:426px" width="40" height="8"><rect x="0" y="0" width="2" height="8" fill="#303030"/><rect x="4" y="0" width="2" height="8" fill="#303030"/><rect x="8" y="0" width="2" height="8" fill="#303030"/><rect x="12" y="0" width="2" height="8" fill="#303030"/><rect x="16" y="0" width="2" height="8" fill="#303030"/><rect x="20" y="0" width="2" height="8" fill="#303030"/><rect x="24" y="0" width="2" height="8" fill="#303030"/><rect x="28" y="0" width="2" height="8" fill="#303030"/><rect x="32" y="0" width="2" height="8" fill="#303030"/><rect x="36" y="0" width="2" height="8" fill="#303030"/></svg>
<svg style="left:2317px;top:508px" width="40" height="8"><rect x="0" y="0" width="2" height="8" fill="#303030"/><rect x="4" y="0" width="2" height="8" fill="#303030"/><rect x="8" y="0" width="2" height="8" fill="#303030"/><rect x="12" y="0" width="2" height="8" fill="#303030"/><rect x="16" y="0" width="2" height="8" fill="#303030"/><rect x="20" y="0" width="2" height="8" fill="#303030"/><rect x="24" y="0" width="2" height="8" fill="#303030"/><rect x="28" y="0" width="2" height="8" fill="#303030"/><rect x="32" y="0" width="2" height="8" fill="#303030"/><rect x="36" y="0" width="2" height="8" fill="#303030"/></svg>
<svg style="left:2317px;top:590px" width="40" height="8"><rect x="0" y="0" width="2" height="8" fill="#303030"/><rect x="4" y="0" width="2" height="8" fill="#303030"/><rect x="8" y="0" width="2" height="8" fill="#303030"/><rect x="12" y="0" width="2" height="8" fill="#303030"/><rect x="16" y="0" width="2" height="8" fill="#303030"/><rect x="20" y="0" width="2" height="8" fill="#303030"/><rect x="24" y="0" width="2" height="8" fill="#303030"/><rect x="28" y="0" width="2" height="8" fill="#303030"/><rect x="32" y="0" width="2" height="8" fill="#303030"/><rect x="36" y="0" width="2" height="8" fill="#303030"/></svg>
<svg style="left:2317px;top:728px" width="40" height="8"><rect x="0" y="0" width="2" height="8" fill="#303030"/><rect x="4" y="0" width="2" height="8" fill="#303030"/><rect x="8" y="0" width="2" height="8" fill="#303030"/><rect x="12" y="0" width="2" height="8" fill="#303030"/><rect x="16" y="0" width="2" height="8" fill="#303030"/><rect x="20" y="0" width="2" height="8" fill="#303030"/><rect x="24" y="0" width="2" height="8" fill="#303030"/><rect x="28" y="0" width="2" height="8" fill="#303030"/><rect x="32" y="0" width="2" height="8" fill="#303030"/><rect x="36" y="0" width="2" height="8" fill="#303030"/></svg>
<svg style="left:2317px;top:810px" width="40" height="8"><rect x="0" y="0" width="2" height="8" fill="#303030"/><rect x="4" y="0" width="2" height="8" fill="#303030"/><rect x="8" y="0" width="2" height="8" fill="#303030"/><rect x="12" y="0" width="2" height="8" fill="#303030"/><rect x="16" y="0" width="2" height="8" fill="#303030"/><rect x="20" y="0" width="2" height="8" fill="#303030"/><rect x="24" y="0" width="2" height="8" fill="#303030"/><rect x="28" y="0" width="2" height="8" fill="#303030"/><rect x="32" y="0" width="2" height="8" fill="#303030"/><rect x="36" y="0" width="2" height="8" fill="#303030"/></svg>
<svg style="left:2317px;top:948px" width="40" height="8"><rect x="0" y="0" width="2" height="8" fill="#303030"/><rect x="4" y="0" width="2" height="8" fill="#303030"/><rect x="8" y="0" width="2" height="8" fill="#303030"/><rect x="12" y="0" width="2" height="8" fill="#303030"/><rect x="16" y="0" width="2" height="8" fill="#303030"/><rect x="20" y="0" width="2" height="8" fill="#303030"/><rect x="24" y="0" width="2" height="8" fill="#303030"/><rect x="28" y="0" width="2" height="8" fill="#303030"/><rect x="32" y="0" width="2" height="8" fill="#303030"/><rect x="36" y="0" width="2" height="8" fill="#303030"/></svg>
<svg style="left:2317px;top:1141px" width="40" height="8"><rect x="0" y="0" width="2" height="8" fill="#303030"/><rect x="4" y="0" width="2" height="8" fill="#303030"/><rect x="8" y="0" width="2" height="8" fill="#303030"/><rect x="12" y="0" width="2" height="8" fill="#303030"/><rect x="16" y="0" width="2" height="8" fill="#303030"/><rect x="20" y="0" width="2" height="8" fill="#303030"/><rect x="24" y="0" width="2" height="8" fill="#303030"/><rect x="28" y="0" width="2" height="8" fill="#303030"/><rect x="32" y="0" width="2" height="8" fill="#303030"/><rect x="36" y="0" width="2" height="8" fill="#303030"/></svg>
<svg style="left:2317px;top:1336px" width="40" height="8"><rect x="0" y="0" width="2" height="8" fill="#303030"/><rect x="4" y="0" width="2" height="8" fill="#303030"/><rect x="8" y="0" width="2" height="8" fill="#303030"/><rect x="12" y="0" width="2" height="8" fill="#303030"/><rect x="16" y="0" width="2" height="8" fill="#303030"/><rect x="20" y="0" width="2" height="8" fill="#303030"/><rect x="24" y="0" width="2" height="8" fill="#303030"/><rect x="28" y="0" width="2" height="8" fill="#303030"/><rect x="32" y="0" width="2" height="8" fill="#303030"/><rect x="36" y="0" width="2" height="8" fill="#303030"/></svg>
<div class="a" style="left:2298px;top:279.1px;width:74px;height:3px;background:#363636;"></div>
<div class="a" style="left:2298px;top:417.5px;width:74px;height:3px;background:#363636;"></div>
<div class="a" style="left:2298px;top:498.5px;width:74px;height:3px;background:#363636;"></div>
<div class="a" style="left:2298px;top:580.5px;width:74px;height:3px;background:#363636;"></div>
<div class="a" style="left:2298px;top:719.5px;width:74px;height:3px;background:#363636;"></div>
<div class="a" style="left:2298px;top:801.5px;width:74px;height:3px;background:#363636;"></div>
<div class="a" style="left:2298px;top:939.5px;width:74px;height:3px;background:#363636;"></div>
<div class="a" style="left:2298px;top:1133.0px;width:74px;height:3px;background:#363636;"></div>
<div class="a" style="left:2298px;top:1327.5px;width:74px;height:3px;background:#363636;"></div>
<div class="a" style="left:2298px;top:1521.0px;width:74px;height:3px;background:#363636;"></div>
<svg style="left:2316.6px;top:169.0px" width="40" height="40" viewBox="0 0 40 40"><rect x="4" y="2" width="20" height="20" fill="none" stroke="#c4c4c4" stroke-width="2.2"/><rect x="13" y="14" width="22" height="19" fill="#535353" stroke="#c4c4c4" stroke-width="2.2"/></svg>
<svg style="left:2316.6px;top:226.0px" width="40" height="40" viewBox="0 0 40 40"><path d="M17 5 H5 V35 H33 V23" fill="none" stroke="#c4c4c4" stroke-width="3.2"/><path d="M20 20 L34 6 M24 5 H35 V16" fill="none" stroke="#c4c4c4" stroke-width="3.2"/></svg>
<svg style="left:2316.6px;top:312.0px" width="40" height="32" viewBox="0 0 40 32"><path d="M20 2 C33 2 39 8 39 15 C39 22 33 21 30 24 C27 28 26 31 17 31 C6 31 1 25 1 18 C1 9 8 2 20 2Z" fill="#c4c4c4"/><circle cx="9" cy="18" r="3" fill="#535353"/><circle cx="16" cy="23" r="3.2" fill="#535353"/><circle cx="25" cy="21" r="2.6" fill="#535353"/><circle cx="31" cy="15" r="2.2" fill="#535353"/><circle cx="31" cy="9" r="1.8" fill="#535353"/></svg>
<svg style="left:2318.6px;top:367.0px" width="36" height="36" viewBox="0 0 36 36"><path d="M3 3 A30 30 0 0 1 33 32 L3 32Z" fill="#ddd"/><path d="M3 3 L3 32 L9 32Z" fill="#1e1e1e"/><path d="M3 3 L9 32 L15 32 Z" fill="#444"/><path d="M3 3 L15 32 L33 30Z" fill="#777"/><path d="M3 3 L33 30 L33 24 Z" fill="#aaa"/><path d="M3 3 A30 30 0 0 1 33 32 L3 32Z" fill="none" stroke="#c4c4c4" stroke-width="1.6"/></svg>
<svg style="left:2320px;top:453px" width="36" height="26"><defs><linearGradient id="rg1"><stop offset="0" stop-color="#1a1a1a"/><stop offset="1" stop-color="#eeeeee"/></linearGradient></defs><rect x="1.5" y="1.5" width="33" height="23" fill="url(#rg1)" stroke="#c4c4c4" stroke-width="2.5"/></svg>
<svg style="left:2318.6px;top:531.0px" width="36" height="36" viewBox="0 0 36 36"><circle cx="18" cy="18" r="16" fill="none" stroke="#c4c4c4" stroke-width="1.8" stroke-dasharray="3 2.5"/><circle cx="18" cy="18" r="12" fill="#c4c4c4"/></svg>
<svg style="left:2318.6px;top:616.6px" width="36" height="26" viewBox="0 0 36 26"><rect x="1" y="1" width="34" height="2.5" fill="#c4c4c4"/><rect x="1" y="9" width="34" height="5" fill="#c4c4c4"/><rect x="1" y="19" width="34" height="6" fill="#c4c4c4"/></svg>
<svg style="left:2317.6px;top:668.8px" width="38" height="38" viewBox="0 0 38 38"><circle cx="13" cy="13" r="12" fill="#c4c4c4"/><circle cx="23" cy="23" r="11.5" fill="#777" stroke="#c4c4c4" stroke-width="2"/><path d="M13 25 A12 12 0 0 0 25 13 A11.5 11.5 0 0 0 13 25Z" fill="#999"/></svg>
<svg style="left:2319.6px;top:749.5px" width="34" height="38" viewBox="0 0 34 38"><path d="M17 2 L31 10 L31 27 L17 35 L3 27 L3 10 Z M3 10 L17 18 L31 10 M17 18 L17 35" fill="none" stroke="#c4c4c4" stroke-width="2.2" stroke-linejoin="round"/></svg>
<svg style="left:2323.6px;top:836.5px" width="26" height="28" viewBox="0 0 26 28"><path d="M2 2 L25 14 L2 26Z" fill="#c4c4c4"/></svg>
<svg style="left:2315.6px;top:895.0px" width="42" height="22" viewBox="0 0 42 22"><rect x="2" y="3.5" width="25" height="15" rx="7.5" fill="none" stroke="#c4c4c4" stroke-width="3.2"/><rect x="15" y="3.5" width="25" height="15" rx="7.5" fill="none" stroke="#c4c4c4" stroke-width="3.2"/><rect x="18" y="16" width="6" height="5" fill="#535353"/><path d="M17 18.5 H24" stroke="#c4c4c4" stroke-width="3.2"/></svg>
<svg style="left:2319.6px;top:971.5px" width="34" height="34" viewBox="0 0 34 34"><rect x="4" y="4" width="26" height="26" fill="none" stroke="#c4c4c4" stroke-width="3.2"/><rect x="1" y="1" width="7" height="7" fill="#c4c4c4"/><rect x="26" y="1" width="7" height="7" fill="#c4c4c4"/><rect x="1" y="26" width="7" height="7" fill="#c4c4c4"/><rect x="26" y="26" width="7" height="7" fill="#c4c4c4"/><rect x="13.5" y="1" width="7" height="6" fill="#c4c4c4"/><rect x="13.5" y="27" width="7" height="6" fill="#c4c4c4"/><rect x="1" y="13.5" width="6" height="7" fill="#c4c4c4"/><rect x="27" y="13.5" width="6" height="7" fill="#c4c4c4"/><circle cx="17" cy="17" r="2" fill="#c4c4c4"/></svg>
<svg style="left:2319.6px;top:1026.0px" width="34" height="38" viewBox="0 0 34 38"><rect x="2" y="1" width="1.8" height="36" fill="#c4c4c4"/><rect x="6" y="6" width="16" height="11" fill="#c4c4c4"/><rect x="6" y="22" width="26" height="10" fill="#c4c4c4"/></svg>
<svg style="left:2319.6px;top:1084.0px" width="34" height="34" viewBox="0 0 34 34"><rect x="1" y="1" width="17" height="17" fill="#c4c4c4"/><rect x="11" y="11" width="21" height="21" fill="#c4c4c4" stroke="#535353" stroke-width="2"/><rect x="11" y="11" width="7" height="7" fill="#888"/></svg>
<svg style="left:2318.6px;top:1161.6px" width="36" height="40" viewBox="0 0 36 40"><path d="M2 32 L12 6 L16 6 L26 32 L22 32 L19.5 25 L8.5 25 L6 32Z M10 21 L18 21 L14 10Z" fill="#c4c4c4" fill-rule="evenodd"/><rect x="30" y="1" width="2.2" height="37" fill="#c4c4c4"/></svg>
<svg style="left:2323.6px;top:1223.0px" width="26" height="34" viewBox="0 0 26 34"><path d="M12 2 H24 V32 H21 V5 H17 V32 H14 V19 A8.5 8.5 0 0 1 12 2Z" fill="#c4c4c4"/></svg>
<div class="t" style="left:2319.77px;top:1276.00px;font-size:40px;font-weight:400;font-style:italic;font-family:'Liberation Serif';color:#b8b8b8;transform:scaleX(1.1154);transform-origin:0 0;">O</div>
<svg style="left:2319.6px;top:1364.0px" width="34" height="24" viewBox="0 0 34 24"><rect x="1" y="1" width="32" height="22" fill="#c4c4c4"/><rect x="3.5" y="3.5" width="8" height="7" fill="#8a8a8a"/><rect x="22.5" y="3.5" width="8" height="7" fill="#8a8a8a"/><rect x="3.5" y="13.5" width="8" height="7" fill="#8a8a8a"/><rect x="13" y="13.5" width="8" height="7" fill="#8a8a8a"/><rect x="22.5" y="13.5" width="8" height="7" fill="#8a8a8a"/></svg>
<svg style="left:2318.6px;top:1412.0px" width="36" height="40" viewBox="0 0 36 40"><rect x="8" y="26" width="18" height="14" rx="2" fill="#c4c4c4"/><path d="M16 26 L13 4 L17 4 L18 26Z M11 26 C6 20 1 16 3 10 C8 12 12 18 13 26Z M20 26 L24 14 C26 10 32 8 34 12 C30 14 26 16 22 26Z" fill="#c4c4c4"/><rect x="12" y="2" width="6" height="8" fill="#c4c4c4"/></svg>
<svg style="left:2319.6px;top:1469.0px" width="34" height="36" viewBox="0 0 34 36"><circle cx="17" cy="9" r="8" fill="#c4c4c4"/><circle cx="8" cy="19" r="8" fill="#c4c4c4"/><circle cx="26" cy="19" r="8" fill="#c4c4c4"/><path d="M15 18 L19 18 L21 30 L27 33 L7 33 L13 30Z" fill="#c4c4c4"/><rect x="5" y="32" width="24" height="2" fill="#c4c4c4"/></svg>
<div class="a" style="left:2377px;top:144px;width:500px;height:1533px;background:#535353;"></div>
<div class="a" style="left:2377px;top:144px;width:500px;height:53px;background:#424242;"></div>
<div class="a" style="left:2377px;top:144px;width:141px;height:53px;background:#535353;"></div>
<div class="a" style="left:2518px;top:144px;width:2px;height:53px;background:#393939;"></div>
<div class="a" style="left:2620px;top:144px;width:2px;height:53px;background:#393939;"></div>
<div class="a" style="left:2745px;top:144px;width:2px;height:53px;background:#393939;"></div>
<div class="a" style="left:2520px;top:195px;width:357px;height:2px;background:#3b3b3b;"></div>
<div class="t" style="left:2395.03px;top:156.90px;font-size:22px;font-weight:700;font-style:normal;font-family:'Liberation Sans';color:#f0f0f0;transform:scaleX(0.9723);transform-origin:0 0;">Properties</div>
<div class="t" style="left:2535.05px;top:156.90px;font-size:22px;font-weight:700;font-style:normal;font-family:'Liberation Sans';color:#b8b8b8;transform:scaleX(0.9468);transform-origin:0 0;">Layers</div>
<div class="t" style="left:2639.02px;top:156.90px;font-size:22px;font-weight:700;font-style:normal;font-family:'Liberation Sans';color:#b8b8b8;transform:scaleX(0.9815);transform-origin:0 0;">Libraries</div>
<div class="t" style="left:2397.02px;top:220.90px;font-size:22px;font-weight:400;font-style:normal;font-family:'Liberation Sans';color:#d6d6d6;transform:scaleX(0.9779);transform-origin:0 0;">No Selection</div>
<div class="a" style="left:2377px;top:262px;width:477px;height:2px;background:#4a4a4a;"></div>
<div class="a" style="left:2377px;top:519px;width:477px;height:2px;background:#4a4a4a;"></div>
<div class="a" style="left:2377px;top:595px;width:477px;height:2px;background:#4a4a4a;"></div>
<div class="a" style="left:2377px;top:671.5px;width:477px;height:2px;background:#4a4a4a;"></div>
<div class="a" style="left:2377px;top:747px;width:477px;height:2px;background:#4a4a4a;"></div>
<div class="a" style="left:2377px;top:1030px;width:477px;height:2px;background:#4a4a4a;"></div>
<div class="t" style="left:2397.01px;top:289.30px;font-size:22px;font-weight:400;font-style:normal;font-family:'Liberation Sans';color:#d6d6d6;transform:scaleX(0.9944);transform-origin:0 0;">Document</div>
<div class="t" style="left:2481.00px;top:344.70px;font-size:22px;font-weight:400;font-style:normal;font-family:'Liberation Sans';color:#d6d6d6;transform:scaleX(0.9977);transform-origin:0 0;">Units:</div>
<div class="a" style="left:2549px;top:335px;width:229px;height:40px;border-radius:4px;background:#454545;border:1.5px solid #5c5c5c"></div>
<div class="t" style="left:2561.05px;top:344.70px;font-size:22px;font-weight:400;font-style:normal;font-family:'Liberation Sans';color:#ececec;transform:scaleX(0.9535);transform-origin:0 0;">Pixels</div>
<svg style="left:2752px;top:349px" width="18" height="12"><path d="M2 2 L9 9 L16 2" fill="none" stroke="#e0e0e0" stroke-width="2.2"/></svg>
<div class="t" style="left:2445.80px;top:402.10px;font-size:22px;font-weight:400;font-style:normal;font-family:'Liberation Sans';color:#d6d6d6;transform:scaleX(1.0092);transform-origin:0 0;">Artboard:</div>
<div class="a" style="left:2549px;top:393px;width:147px;height:40px;border-radius:4px;background:#404040;border:1.5px solid #5c5c5c"></div>
<div class="a" style="left:2660px;top:394px;width:2px;height:38px;background:#5a5a5a;"></div>
<div class="a" style="left:2662px;top:394.5px;width:32.5px;height:37px;background:#474747"></div>
<div class="t" style="left:2556.64px;top:399.30px;font-size:22px;font-weight:400;font-style:normal;font-family:'Liberation Sans';color:#ececec;transform:scaleX(0.8636);transform-origin:0 0;">1</div>
<svg style="left:2669px;top:406px" width="18" height="12"><path d="M2 2 L9 9 L16 2" fill="none" stroke="#e0e0e0" stroke-width="2.2"/></svg>
<svg style="left:2723px;top:405px" width="12" height="18"><path d="M11 1 L1 9 L11 17Z" fill="#6c6c6c"/></svg>
<svg style="left:2764px;top:405px" width="12" height="18"><path d="M1 1 L11 9 L1 17Z" fill="#6c6c6c"/></svg>
<div class="a" style="left:2549px;top:451px;width:229px;height:40px;border-radius:4px;border:1.8px solid #6a6a6a"></div>
<div class="t" style="left:2592.09px;top:460.30px;font-size:22px;font-weight:700;font-style:normal;font-family:'Liberation Sans';color:#f0f0f0;transform:scaleX(0.9086);transform-origin:0 0;">Edit Artboards</div>
<div class="t" style="left:2397.04px;top:546.30px;font-size:22px;font-weight:400;font-style:normal;font-family:'Liberation Sans';color:#d6d6d6;transform:scaleX(0.9616);transform-origin:0 0;">Ruler &amp; Grids</div>
<svg style="left:2575.0px;top:542.0px" width="34" height="34" viewBox="0 0 34 34"><path d="M1 1 H33 V7 H7 V33 H1Z" fill="#c4c4c4"/><rect x="11" y="3" width="2.5" height="2" fill="#535353"/><rect x="17" y="3" width="2.5" height="2" fill="#535353"/><rect x="23" y="3" width="2.5" height="2" fill="#535353"/><rect x="29" y="3" width="2.5" height="2" fill="#535353"/><rect x="3" y="11" width="2" height="2.5" fill="#535353"/><rect x="3" y="17" width="2" height="2.5" fill="#535353"/><rect x="3" y="23" width="2" height="2.5" fill="#535353"/><rect x="3" y="29" width="2" height="2.5" fill="#535353"/></svg>
<svg style="left:2635.0px;top:542.0px" width="34" height="34" viewBox="0 0 34 34"><path d="M2 2 H32 V32 H2Z M12 2 V32 M22 2 V32 M2 12 H32 M2 22 H32" fill="none" stroke="#c4c4c4" stroke-width="2.2"/></svg>
<svg style="left:2695.0px;top:542.0px" width="34" height="34" viewBox="0 0 34 34"><rect x="1.5" y="1.5" width="31" height="31" fill="#6a6a6a" stroke="#c4c4c4" stroke-width="2.2"/><rect x="3.0" y="3.0" width="6.5" height="6.5" fill="#8a8a8a"/><rect x="3.0" y="16.0" width="6.5" height="6.5" fill="#8a8a8a"/><rect x="9.5" y="9.5" width="6.5" height="6.5" fill="#8a8a8a"/><rect x="9.5" y="22.5" width="6.5" height="6.5" fill="#8a8a8a"/><rect x="16.0" y="3.0" width="6.5" height="6.5" fill="#8a8a8a"/><rect x="16.0" y="16.0" width="6.5" height="6.5" fill="#8a8a8a"/><rect x="22.5" y="9.5" width="6.5" height="6.5" fill="#8a8a8a"/><rect x="22.5" y="22.5" width="6.5" height="6.5" fill="#8a8a8a"/></svg>
<div class="t" style="left:2397.05px;top:622.30px;font-size:22px;font-weight:400;font-style:normal;font-family:'Liberation Sans';color:#d6d6d6;transform:scaleX(0.9461);transform-origin:0 0;">Guides</div>
<div class="a" style="left:2570px;top:612px;width:44px;height:44px;border-radius:5px;background:#2f2f2f"></div>
<div class="a" style="left:2690px;top:612px;width:44px;height:44px;border-radius:5px;background:#2f2f2f"></div>
<svg style="left:2575.0px;top:617.0px" width="34" height="34" viewBox="0 0 34 34"><path d="M6 1 V33 M12 1 V33 M1 10 H33 M1 24 H33" stroke="#ececec" stroke-width="2.4"/></svg>
<svg style="left:2635.0px;top:617.0px" width="34" height="34" viewBox="0 0 34 34"><path d="M6 1 V33 M12 1 V33 M1 10 H32 M1 24 H14" stroke="#c4c4c4" stroke-width="2.2"/><rect x="20" y="20" width="13" height="11" fill="#c4c4c4"/><path d="M22 20 V16 A4.5 4.5 0 0 1 31 16" fill="none" stroke="#c4c4c4" stroke-width="2.2"/></svg>
<svg style="left:2695.0px;top:617.0px" width="34" height="34" viewBox="0 0 34 34"><path d="M6 1 V33 M1 10 H33" stroke="#ececec" stroke-width="2.4"/><path d="M17 4 L7 10 L17 16" fill="none" stroke="#ececec" stroke-width="2.4"/><path d="M24 15 L29 15 L26 21 L31 21 L22 33 L24 25 L20 25Z" fill="#ececec"/></svg>
<div class="t" style="left:2397.03px;top:698.30px;font-size:22px;font-weight:400;font-style:normal;font-family:'Liberation Sans';color:#d6d6d6;transform:scaleX(0.9652);transform-origin:0 0;">Snap Options</div>
<div class="a" style="left:2570px;top:688px;width:44px;height:44px;border-radius:5px;background:#2f2f2f"></div>
<div class="a" style="left:2690px;top:688px;width:44px;height:44px;border-radius:5px;background:#2f2f2f"></div>
<svg style="left:2575.0px;top:693.0px" width="34" height="34" viewBox="0 0 34 34"><rect x="4.5" y="3" width="2" height="28" fill="#ececec"/><rect x="3" y="14" width="5" height="6" fill="#ececec"/><path d="M13 6 H25 A7 7 0 0 1 25 20 H13" fill="none" stroke="#ececec" stroke-width="3.6"/></svg>
<svg style="left:2635.0px;top:693.0px" width="34" height="34" viewBox="0 0 34 34"><path d="M2 3 H9 V31 H2 Z M2 10 H9 M2 17 H9 M2 24 H9" fill="none" stroke="#c4c4c4" stroke-width="1.8"/><path d="M13 6 H25 A7 7 0 0 1 25 20 H13" fill="none" stroke="#c4c4c4" stroke-width="3.6"/></svg>
<svg style="left:2695.0px;top:693.0px" width="34" height="34" viewBox="0 0 34 34"><rect x="3" y="2" width="8" height="8" fill="#ececec"/><rect x="3" y="13" width="8" height="8" fill="#ececec"/><rect x="3" y="24" width="8" height="8" fill="#ececec"/><path d="M14 6 H25 A7 7 0 0 1 25 20 H14" fill="none" stroke="#ececec" stroke-width="3.6"/></svg>
<div class="t" style="left:2397.06px;top:771.30px;font-size:22px;font-weight:400;font-style:normal;font-family:'Liberation Sans';color:#d6d6d6;transform:scaleX(0.9438);transform-origin:0 0;">Preferences</div>
<div class="t" style="left:2397.01px;top:823.90px;font-size:22px;font-weight:400;font-style:normal;font-family:'Liberation Sans';color:#d6d6d6;transform:scaleX(0.9881);transform-origin:0 0;">Keyboard Increment:</div>
<div class="a" style="left:2610px;top:813.5px;width:119px;height:40px;border-radius:4px;background:#434343;border:1.5px solid #5a5a5a"></div>
<div class="t" style="left:2620.99px;top:818.30px;font-size:22px;font-weight:400;font-style:normal;font-family:'Liberation Sans';color:#ececec;transform:scaleX(1.0103);transform-origin:0 0;">1 px</div>
<div class="a" style="left:2404px;top:879.6px;width:24px;height:23px;border-radius:4px;background:#cfcfcf"></div>
<svg style="left:2404px;top:879.6px" width="24" height="23"><path d="M6 11.5 L10.5 16 L18.5 7" fill="none" stroke="#2a2a2a" stroke-width="2.6"/></svg>
<div class="t" style="left:2433.06px;top:879.90px;font-size:22px;font-weight:400;font-style:normal;font-family:'Liberation Sans';color:#d6d6d6;transform:scaleX(0.9399);transform-origin:0 0;">Use Preview Bounds</div>
<div class="a" style="left:2404px;top:927.6px;width:24px;height:23px;border-radius:4px;background:#cfcfcf"></div>
<svg style="left:2404px;top:927.6px" width="24" height="23"><path d="M6 11.5 L10.5 16 L18.5 7" fill="none" stroke="#2a2a2a" stroke-width="2.6"/></svg>
<div class="t" style="left:2433.06px;top:927.90px;font-size:22px;font-weight:400;font-style:normal;font-family:'Liberation Sans';color:#d6d6d6;transform:scaleX(0.9394);transform-origin:0 0;">Scale Corners</div>
<div class="a" style="left:2404px;top:975px;width:24px;height:23px;border-radius:4px;border:1.8px solid #bdbdbd"></div>
<div class="t" style="left:2433.05px;top:975.30px;font-size:22px;font-weight:400;font-style:normal;font-family:'Liberation Sans';color:#d6d6d6;transform:scaleX(0.9454);transform-origin:0 0;">Scale Strokes &amp; Effects</div>
<div class="t" style="left:2397.01px;top:1066.30px;font-size:22px;font-weight:400;font-style:normal;font-family:'Liberation Sans';color:#d6d6d6;transform:scaleX(0.9888);transform-origin:0 0;">Quick Actions</div>
<div class="a" style="left:2399px;top:1111.5px;width:231px;height:40.5px;border-radius:4px;border:1.8px solid #6a6a6a"></div>
<div class="a" style="left:2651px;top:1111.5px;width:200px;height:40.5px;border-radius:4px;border:1.8px solid #6a6a6a"></div>
<div class="t" style="left:2433.48px;top:1121.90px;font-size:22px;font-weight:700;font-style:normal;font-family:'Liberation Sans';color:#f0f0f0;transform:scaleX(0.9230);transform-origin:0 0;">Document Setup</div>
<div class="t" style="left:2694.11px;top:1121.90px;font-size:22px;font-weight:700;font-style:normal;font-family:'Liberation Sans';color:#f0f0f0;transform:scaleX(0.8899);transform-origin:0 0;">Preferences</div>
<div class="a" style="left:84px;top:1644px;width:2176px;height:33px;background:#474747;"></div>
<div class="a" style="left:84px;top:1644px;width:2176px;height:2px;background:#3a3a3a;"></div>
<div class="a" style="left:92px;top:1646px;width:100px;height:31px;background:#3f3f3f;border-radius:4px 4px 0 0;border:1px solid #4b4b4b;border-bottom:0"></div>
<div class="a" style="left:193px;top:1646px;width:35px;height:31px;background:#3f3f3f;border-radius:4px 4px 0 0;border:1px solid #4b4b4b;border-bottom:0"></div>
<div class="a" style="left:238px;top:1646px;width:100px;height:31px;background:#3f3f3f;border-radius:4px 4px 0 0;border:1px solid #4b4b4b;border-bottom:0"></div>
<div class="a" style="left:339px;top:1646px;width:35px;height:31px;background:#3f3f3f;border-radius:4px 4px 0 0;border:1px solid #4b4b4b;border-bottom:0"></div>
<div class="a" style="left:458px;top:1646px;width:80px;height:31px;background:#3f3f3f;border-radius:4px 4px 0 0;border:1px solid #4b4b4b;border-bottom:0"></div>
<div class="a" style="left:539px;top:1646px;width:35px;height:31px;background:#3f3f3f;border-radius:4px 4px 0 0;border:1px solid #4b4b4b;border-bottom:0"></div>
<div class="a" style="left:84px;top:1646px;width:8px;height:31px;background:#474747;"></div>
<div class="t" style="left:99.00px;top:1652.95px;font-size:23px;font-weight:400;font-style:normal;font-family:'Liberation Sans';color:#f0f0f0;transform:scaleX(0.9090);transform-origin:0 0;">31,97%</div>
<div class="t" style="left:244.50px;top:1652.95px;font-size:23px;font-weight:400;font-style:normal;font-family:'Liberation Sans';color:#f0f0f0;transform:scaleX(0.9619);transform-origin:0 0;">0°</div>
<div class="t" style="left:463.98px;top:1652.95px;font-size:23px;font-weight:400;font-style:normal;font-family:'Liberation Sans';color:#f0f0f0;transform:scaleX(0.8182);transform-origin:0 0;">1</div>
<svg style="left:202.5px;top:1659px" width="16" height="10"><path d="M1.5 1.5 L8 8 L14.5 1.5" fill="none" stroke="#e0e0e0" stroke-width="2"/></svg>
<svg style="left:348.5px;top:1659px" width="16" height="10"><path d="M1.5 1.5 L8 8 L14.5 1.5" fill="none" stroke="#e0e0e0" stroke-width="2"/></svg>
<svg style="left:548.5px;top:1659px" width="16" height="10"><path d="M1.5 1.5 L8 8 L14.5 1.5" fill="none" stroke="#e0e0e0" stroke-width="2"/></svg>
<svg style="left:392px;top:1653px" width="20" height="18"><rect x="1" y="1" width="3" height="16" fill="#5e5e5e"/><path d="M17 1 L6 9 L17 17Z" fill="#5e5e5e"/></svg>
<svg style="left:427px;top:1653px" width="14" height="18"><path d="M12 1 L1 9 L12 17Z" fill="#5e5e5e"/></svg>
<svg style="left:595px;top:1653px" width="14" height="18"><path d="M2 1 L13 9 L2 17Z" fill="#5e5e5e"/></svg>
<svg style="left:624px;top:1653px" width="20" height="18"><rect x="16" y="1" width="3" height="16" fill="#5e5e5e"/><path d="M3 1 L14 9 L3 17Z" fill="#5e5e5e"/></svg>
<div class="a" style="left:657px;top:1646px;width:401px;height:31px;background:#4d4d4d;"></div>
<div class="t" style="left:782.01px;top:1652.90px;font-size:22px;font-weight:400;font-style:normal;font-family:'Liberation Sans';color:#d0d0d0;transform:scaleX(0.9880);transform-origin:0 0;">Direct Selection</div>
<div class="a" style="left:1058px;top:1646px;width:36px;height:31px;background:#4a4a4a;"></div>
<svg style="left:1071px;top:1652px" width="12" height="20"><path d="M1 1 L11 10 L1 19Z" fill="#bdbdbd"/></svg>
<div class="a" style="left:1094px;top:1644px;width:1166px;height:33px;background:#434343;"></div>
<svg style="left:1104px;top:1652px" width="12" height="18"><path d="M10 1 L2 9 L10 17" fill="none" stroke="#a8a8a8" stroke-width="2"/></svg>
<svg style="left:2237px;top:1652px" width="12" height="18"><path d="M2 1 L10 9 L2 17" fill="none" stroke="#a8a8a8" stroke-width="2"/></svg>
<div class="a" style="left:1645px;top:1646px;width:51px;height:30px;border-radius:15px;background:#575757"></div>
<div class="a" style="left:2260px;top:1644px;width:33px;height:33px;background:#474747;"></div>
<div class="a" style="left:0px;top:1676px;width:2880px;height:2px;background:#2e2e2e;"></div>
<div class="a" style="left:0;top:1678px;width:2880px;height:14px;background:linear-gradient(rgba(0,0,0,0.55),rgba(0,0,0,0))"></div>
<div class="a" style="left:1028px;top:735px;width:822px;height:256px;border-radius:14px;box-shadow:0 26px 64px 0 rgba(0,0,0,0.42),0 0 0 1px rgba(0,0,0,0.16)"></div>
<div class="a" style="left:1028px;top:735px;width:822px;height:256px;border-radius:14px;background:#525252;overflow:hidden"><div class="a" style="left:0;top:0;width:822px;height:58px;background:#d9d8d7;border-bottom:1.5px solid #3a3a3a"></div></div>
<div class="t" style="left:1330.50px;top:749.90px;font-size:26px;font-weight:700;font-style:normal;font-family:'Liberation Sans';color:#3a3a3a;transform:scaleX(1.0438);transform-origin:0 0;">Adobe Illustrator</div>
<svg style="left:1059px;top:822px" width="62" height="61"><path d="M31 2 C33 2 34 3 35 5 L60 55 C61 58 60 60 57 60 L5 60 C2 60 1 58 2 55 L27 5 C28 3 29 2 31 2Z" fill="#eec541"/><rect x="27.5" y="17" width="7" height="25" fill="#1f1f1f"/><rect x="27.5" y="46" width="7" height="7" fill="#1f1f1f"/></svg>
<div class="t" style="left:1161.47px;top:823.90px;font-size:26px;font-weight:400;font-style:normal;font-family:'Liberation Sans';color:#f6f6f6;transform:scaleX(1.0262);transform-origin:0 0;-webkit-text-stroke:0.35px #f6f6f6;">Can't finish previewing. There isn't enough memory.</div>
<div class="t" style="left:1160.47px;top:853.50px;font-size:26px;font-weight:400;font-style:normal;font-family:'Liberation Sans';color:#f6f6f6;transform:scaleX(1.0150);transform-origin:0 0;-webkit-text-stroke:0.35px #f6f6f6;">ID: −108</div>
<div class="a" style="left:1660px;top:922.5px;width:160px;height:39.5px;border-radius:20px;background:#5f9eec"></div>
<div class="t" style="left:1722.61px;top:931.90px;font-size:26px;font-weight:400;font-style:normal;font-family:'Liberation Sans';color:#ffffff;transform:scaleX(0.8865);transform-origin:0 0;">OK</div>
<div class="a" style="left:71px;top:1684px;width:2738px;height:105px;border-radius:22px;background:linear-gradient(90deg,#a37464 0%,#ae7e6e 8%,#b98a7a 20%,#b08778 27%,#9d8175 32%,#877974 36%,#7b7470 40%,#77726e 50%,#76726d 100%);box-shadow:inset 0 0 0 1.5px rgba(255,255,255,0.18)"></div>
<div class="a" style="left:86.0px;top:1700.0px;width:68px;height:68px;border-radius:15.5px;overflow:hidden;background:linear-gradient(#5bc6f8,#3a78e8);box-shadow:0 1px 2px rgba(0,0,0,0.25)"><svg style="left:0;top:0" width="68" height="68" viewBox="0 0 67 67"><path d="M37 0 C31 14 28 26 29 37 L38 37 C38 48 39 58 42 67 L67 67 L67 0 Z" fill="#e6eaf0"/><rect x="17" y="19" width="3" height="7" rx="1.5" fill="#222"/><rect x="47" y="19" width="3" height="7" rx="1.5" fill="#222"/><path d="M13 44 C24 54 43 54 54 44" fill="none" stroke="#222" stroke-width="2.4"/></svg></div>
<div class="a" style="left:174.26999999999998px;top:1700.0px;width:68px;height:68px;border-radius:15.5px;overflow:hidden;background:#e5d7d2;box-shadow:0 1px 2px rgba(0,0,0,0.25)"><svg style="left:0;top:0" width="68" height="68" viewBox="0 0 67 67"><rect x="10" y="10" width="13" height="13" rx="3" fill="#5fd15a"/><rect x="27" y="10" width="13" height="13" rx="3" fill="#f5c242"/><rect x="44" y="10" width="13" height="13" rx="3" fill="#f29a3a"/><rect x="10" y="27" width="13" height="13" rx="3" fill="#e03d32"/><rect x="27" y="27" width="13" height="13" rx="3" fill="#b9bfc6"/><rect x="44" y="27" width="13" height="13" rx="3" fill="#ec4f6b"/><rect x="10" y="44" width="13" height="13" rx="3" fill="#9b59e0"/><rect x="27" y="44" width="13" height="13" rx="3" fill="#3d9cf2"/><rect x="44" y="44" width="13" height="13" rx="3" fill="#5ad3b0"/></svg></div>
<div class="a" style="left:262.53999999999996px;top:1700.0px;width:68px;height:68px;border-radius:15.5px;overflow:hidden;background:#f4f4f4;box-shadow:0 1px 2px rgba(0,0,0,0.25)"><svg style="left:0;top:0" width="68" height="68" viewBox="0 0 67 67"><circle cx="33.5" cy="33.5" r="28" fill="#2f86ec"/><circle cx="33.5" cy="33.5" r="24" fill="none" stroke="#cfe4fb" stroke-width="2" stroke-dasharray="0.8 2.2"/><path d="M50 17 L37 37 L30 30Z" fill="#f04a3c"/><path d="M17 50 L30 30 L37 37Z" fill="#f4f4f4"/></svg></div>
<div class="a" style="left:350.81px;top:1700.0px;width:68px;height:68px;border-radius:15.5px;overflow:hidden;background:linear-gradient(#6bdc5f,#33c23e);box-shadow:0 1px 2px rgba(0,0,0,0.25)"><svg style="left:0;top:0" width="68" height="68" viewBox="0 0 67 67"><ellipse cx="33" cy="32" rx="22" ry="18" fill="#f4fff2"/><path d="M18 44 L14 54 L28 47Z" fill="#f4fff2"/></svg></div>
<div class="a" style="left:388.81px;top:1692.0px;width:36px;height:30px;border-radius:15px;background:#e8463b"></div>
<div class="t" style="left:392.84px;top:1698.55px;font-size:17px;font-weight:400;font-style:normal;font-family:'Liberation Sans';color:#fff;transform:scaleX(0.9662);transform-origin:0 0;">146</div>
<div class="a" style="left:439.08px;top:1700.0px;width:68px;height:68px;border-radius:15.5px;overflow:hidden;background:linear-gradient(#2c7ce8,#5fbdf7);box-shadow:0 1px 2px rgba(0,0,0,0.25)"><svg style="left:0;top:0" width="68" height="68" viewBox="0 0 67 67"><rect x="11" y="19" width="45" height="30" rx="3" fill="#f2f2f2"/><path d="M12 21 L33.5 38 L55 21" fill="none" stroke="#c9c9c9" stroke-width="2"/></svg></div>
<div class="a" style="left:527.3499999999999px;top:1700.0px;width:68px;height:68px;border-radius:15.5px;overflow:hidden;background:#7fd86f;box-shadow:0 1px 2px rgba(0,0,0,0.25)"><svg style="left:0;top:0" width="68" height="68" viewBox="0 0 67 67"><path d="M0 0 H25 L40 67 H0Z" fill="#f3f0ea"/><rect x="23" y="0" width="9" height="67" fill="#2f7cf0"/><path d="M0 52 L20 40 L20 67 L0 67Z" fill="#e27fd8"/><path d="M38 67 L50 50 L67 60 L67 67Z" fill="#f6d04a"/><circle cx="28" cy="40" r="12" fill="#2f7cf0" stroke="#fff" stroke-width="3"/><path d="M28 32 L34 46 L28 42 L22 46Z" fill="#fff"/><circle cx="55" cy="10" r="13" fill="none" stroke="#bdbdbd" stroke-width="4"/></svg></div>
<div class="a" style="left:615.62px;top:1700.0px;width:68px;height:68px;border-radius:15.5px;overflow:hidden;background:#f8f8f8;box-shadow:0 1px 2px rgba(0,0,0,0.25)"><svg style="left:0;top:0" width="68" height="68" viewBox="0 0 67 67"><ellipse cx="33.5" cy="21" rx="7" ry="13" fill="#f5c33b" opacity="0.85" transform="rotate(0 33.5 33.5)"/><ellipse cx="33.5" cy="21" rx="7" ry="13" fill="#9bd04a" opacity="0.85" transform="rotate(40 33.5 33.5)"/><ellipse cx="33.5" cy="21" rx="7" ry="13" fill="#4fc57a" opacity="0.85" transform="rotate(80 33.5 33.5)"/><ellipse cx="33.5" cy="21" rx="7" ry="13" fill="#47b3e0" opacity="0.85" transform="rotate(120 33.5 33.5)"/><ellipse cx="33.5" cy="21" rx="7" ry="13" fill="#4f7fe0" opacity="0.85" transform="rotate(160 33.5 33.5)"/><ellipse cx="33.5" cy="21" rx="7" ry="13" fill="#9d66d6" opacity="0.85" transform="rotate(200 33.5 33.5)"/><ellipse cx="33.5" cy="21" rx="7" ry="13" fill="#e066a0" opacity="0.85" transform="rotate(240 33.5 33.5)"/><ellipse cx="33.5" cy="21" rx="7" ry="13" fill="#ee5c43" opacity="0.85" transform="rotate(280 33.5 33.5)"/><ellipse cx="33.5" cy="21" rx="7" ry="13" fill="#f38b3a" opacity="0.85" transform="rotate(320 33.5 33.5)"/></svg></div>
<div class="a" style="left:703.89px;top:1700.0px;width:68px;height:68px;border-radius:15.5px;overflow:hidden;background:linear-gradient(#6bdc5f,#33c23e);box-shadow:0 1px 2px rgba(0,0,0,0.25)"><svg style="left:0;top:0" width="68" height="68" viewBox="0 0 67 67"><rect x="12" y="22" width="30" height="23" rx="5" fill="#fff"/><path d="M44 30 L55 22 L55 45 L44 37Z" fill="#fff"/></svg></div>
<div class="a" style="left:792.16px;top:1700.0px;width:68px;height:68px;border-radius:15.5px;overflow:hidden;background:#fafafa;box-shadow:0 1px 2px rgba(0,0,0,0.25)"><svg style="left:0;top:0" width="68" height="68" viewBox="0 0 67 67"><path d="M0 20 V0 H67 V20Z" fill="#ec5a4c"/></svg></div>
<div class="t" style="left:812.66px;top:1704.60px;font-size:14px;font-weight:700;font-style:normal;font-family:'Liberation Sans';color:#fff;transform:scaleX(0.9679);transform-origin:0 0;">JAN</div>
<div class="t" style="left:802.54px;top:1725.70px;font-size:38px;font-weight:400;font-style:normal;font-family:'Liberation Sans';color:#2b2b2b;transform:scaleX(1.1212);transform-origin:0 0;">25</div>
<div class="a" style="left:880.43px;top:1700.0px;width:68px;height:68px;border-radius:15.5px;overflow:hidden;background:linear-gradient(#ab8a4f,#9a7743);box-shadow:0 1px 2px rgba(0,0,0,0.25)"><svg style="left:0;top:0" width="68" height="68" viewBox="0 0 67 67"><rect x="60" y="8" width="7" height="13" fill="#cfcfcf"/><rect x="60" y="21" width="7" height="13" fill="#5ab6f0"/><rect x="60" y="34" width="7" height="13" fill="#f0953a"/><rect x="60" y="47" width="7" height="13" fill="#6fcf5a"/><rect x="0" y="0" width="61" height="67" rx="12" fill="#a5834a"/><circle cx="31" cy="33" r="20" fill="none" stroke="#8d6d3a" stroke-width="2"/><circle cx="31" cy="27" r="7.5" fill="#8d6d3a"/><path d="M17 46 C21 36 41 36 45 46 A20 20 0 0 1 17 46Z" fill="#8d6d3a"/></svg></div>
<div class="a" style="left:968.6999999999999px;top:1700.0px;width:68px;height:68px;border-radius:15.5px;overflow:hidden;background:#fbfbfb;box-shadow:0 1px 2px rgba(0,0,0,0.25)"><svg style="left:0;top:0" width="68" height="68" viewBox="0 0 67 67"><circle cx="14" cy="17" r="5.5" fill="none" stroke="#2f7cf0" stroke-width="1.8"/><circle cx="14" cy="17" r="3.5" fill="#2f7cf0"/><circle cx="14" cy="34" r="5.5" fill="none" stroke="#ec4133" stroke-width="1.8"/><circle cx="14" cy="34" r="3.5" fill="#ec4133"/><circle cx="14" cy="51" r="5.5" fill="none" stroke="#f29a3a" stroke-width="1.8"/><circle cx="14" cy="51" r="3.5" fill="#f29a3a"/><path d="M25 17 H59 M25 34 H59 M25 51 H59" stroke="#cfcfcf" stroke-width="1.5"/></svg></div>
<div class="a" style="left:1056.9699999999998px;top:1700.0px;width:68px;height:68px;border-radius:15.5px;overflow:hidden;background:#fafafa;box-shadow:0 1px 2px rgba(0,0,0,0.25)"><svg style="left:0;top:0" width="68" height="68" viewBox="0 0 67 67"><circle cx="33.5" cy="33.5" r="29" fill="#dd4b3e"/><path d="M33.5 33.5 L58.6 48 A29 29 0 0 1 19 58.6 Z" fill="#f2c14a"/><path d="M33.5 33.5 L19 58.6 A29 29 0 0 1 8.4 19Z" fill="#4ba35a"/><path d="M33.5 33.5 L58.6 19 A29 29 0 0 1 58.6 48Z" fill="#f2c14a"/><circle cx="33.5" cy="33.5" r="13.5" fill="#fff"/><circle cx="33.5" cy="33.5" r="10.5" fill="#3f7be8"/></svg></div>
<div class="a" style="left:1145.24px;top:1700.0px;width:68px;height:68px;border-radius:15.5px;overflow:hidden;background:#f6f5f1;box-shadow:0 1px 2px rgba(0,0,0,0.25)"><svg style="left:0;top:0" width="68" height="68" viewBox="0 0 67 67"><path d="M0 17 V0 H67 V17Z" fill="#f7d046"/><path d="M0 18 H67" stroke="#d9d6cc" stroke-width="1" stroke-dasharray="1 1.5"/><path d="M0 36 H67 M0 52 H67" stroke="#dedbd2" stroke-width="1.2"/></svg></div>
<div class="a" style="left:1233.51px;top:1700.0px;width:68px;height:68px;border-radius:15.5px;overflow:hidden;background:#fdfdfd;box-shadow:0 1px 2px rgba(0,0,0,0.25)"><svg style="left:0;top:0" width="68" height="68" viewBox="0 0 67 67"><rect x="27" y="9" width="32" height="36" rx="3" fill="#5bc6f4"/><circle cx="27" cy="47" r="17" fill="#ee6c50" opacity="0.95"/><path d="M27 39 A17 17 0 0 0 27 39" fill="#7fb3d9"/><path d="M12 46 C18 30 24 26 27 38 C30 48 36 24 40 34 C43 42 48 38 56 32" fill="none" stroke="#163a6a" stroke-width="3.4" stroke-linecap="round"/></svg></div>
<div class="a" style="left:1321.78px;top:1700.0px;width:68px;height:68px;border-radius:15.5px;overflow:hidden;background:linear-gradient(135deg,#f4f4f4,#b8b8b8);box-shadow:0 1px 2px rgba(0,0,0,0.25)"><svg style="left:0;top:0" width="68" height="68" viewBox="0 0 67 67"><path d="M14 30 C12 14 48 8 52 24 C55 36 36 34 32 42 C30 48 38 54 40 56" fill="none" stroke="#2c2c2c" stroke-width="8" stroke-linecap="round"/><path d="M40 67 L67 40 V67Z" fill="#4a90d9"/></svg></div>
<div class="t" style="left:1371.28px;top:1749.80px;font-size:12px;font-weight:700;font-style:normal;font-family:'Liberation Sans';color:#fff;transform:scaleX(0.9507);transform-origin:0 0;">10</div>
<div class="a" style="left:1410.05px;top:1700.0px;width:68px;height:68px;border-radius:15.5px;overflow:hidden;background:#310000;box-shadow:0 1px 2px rgba(0,0,0,0.25)"><svg style="left:0;top:0" width="68" height="68" viewBox="0 0 67 67"></svg></div>
<div class="t" style="left:1425.05px;top:1717.10px;font-size:34px;font-weight:700;font-style:normal;font-family:'Liberation Sans';color:#ff9a00;transform:scaleX(1.1673);transform-origin:0 0;">Ai</div>
<div class="a" style="left:1498.32px;top:1700.0px;width:68px;height:68px;border-radius:15.5px;overflow:hidden;background:#1c1c1c;box-shadow:0 1px 2px rgba(0,0,0,0.25)"><svg style="left:0;top:0" width="68" height="68" viewBox="0 0 67 67"></svg></div>
<div class="t" style="left:1528.32px;top:1720.20px;font-size:28px;font-weight:700;font-style:normal;font-family:'Liberation Sans';color:#fff;transform:scaleX(1.0267);transform-origin:0 0;">tv</div>
<svg style="left:1498.32px;top:1700.0px" width="68" height="68" viewBox="0 0 67 67"><path d="M22 24 C25 24 27 27 27 27 C24 29 24 34 28 36 C27 39 25 42 22 42 C20 42 19 41 17 41 C15 41 14 42 12 42 C9 40 7 35 8 30 C9 26 12 24 15 24 C17 24 18 25 19 25 C20 25 21 24 22 24Z M22 19 C22 21 20 23 18 23 C18 21 20 19 22 19Z" fill="#fff"/></svg>
<div class="a" style="left:1586.59px;top:1700.0px;width:68px;height:68px;border-radius:15.5px;overflow:hidden;background:linear-gradient(#f95b6c,#e8354a);box-shadow:0 1px 2px rgba(0,0,0,0.25)"><svg style="left:0;top:0" width="68" height="68" viewBox="0 0 67 67"><path d="M26 16 L46 12 V42 A6 6 0 1 1 42 36 V22 L30 25 V47 A6 6 0 1 1 26 41Z" fill="#fff"/></svg></div>
<div class="a" style="left:1674.86px;top:1700.0px;width:68px;height:68px;border-radius:15.5px;overflow:hidden;background:linear-gradient(#c15af0,#8a37d8);box-shadow:0 1px 2px rgba(0,0,0,0.25)"><svg style="left:0;top:0" width="68" height="68" viewBox="0 0 67 67"><circle cx="33.5" cy="29" r="20" fill="none" stroke="#fff" stroke-width="3.5"/><circle cx="33.5" cy="29" r="12" fill="none" stroke="#fff" stroke-width="3.5"/><circle cx="33.5" cy="28" r="6" fill="#fff"/><rect x="29" y="37" width="9" height="20" rx="4.5" fill="#fff"/></svg></div>
<div class="a" style="left:1763.1299999999999px;top:1700.0px;width:68px;height:68px;border-radius:15.5px;overflow:hidden;background:linear-gradient(#39a6f7,#1f7fe8);box-shadow:0 1px 2px rgba(0,0,0,0.25)"><svg style="left:0;top:0" width="68" height="68" viewBox="0 0 67 67"><rect x="14" y="14" width="39" height="24" rx="2" fill="#f4f4f4"/><circle cx="33.5" cy="25" r="7" fill="#f29a3a"/><path d="M33.5 38 V58 M24 58 H43" stroke="#eaeaea" stroke-width="2.5"/></svg></div>
<div class="a" style="left:1851.3999999999999px;top:1700.0px;width:68px;height:68px;border-radius:15.5px;overflow:hidden;background:linear-gradient(#6bdc5f,#2fb93c);box-shadow:0 1px 2px rgba(0,0,0,0.25)"><svg style="left:0;top:0" width="68" height="68" viewBox="0 0 67 67"><rect x="16" y="38" width="7" height="18" rx="2" fill="#fff"/><rect x="27" y="26" width="7" height="30" rx="2" fill="#fff"/><rect x="38" y="14" width="7" height="42" rx="2" fill="#fff"/><rect x="49" y="30" width="7" height="26" rx="2" fill="#fff"/></svg></div>
<div class="a" style="left:1939.6699999999998px;top:1700.0px;width:68px;height:68px;border-radius:15.5px;overflow:hidden;background:linear-gradient(#f8b24a,#ee8a2a);box-shadow:0 1px 2px rgba(0,0,0,0.25)"><svg style="left:0;top:0" width="68" height="68" viewBox="0 0 67 67"><path d="M52 10 L18 52 L16 57 L21 54 L55 13Z" fill="#fff"/><path d="M16 58 H56" stroke="#fff" stroke-width="1.5"/></svg></div>
<div class="a" style="left:2027.9399999999996px;top:1700.0px;width:68px;height:68px;border-radius:50%;background:#62d36e"></div>
<svg style="left:2027.9399999999996px;top:1700.0px" width="68" height="68" viewBox="0 0 67 67"><path d="M15 24 C28 19 42 20 53 27 M17 35 C28 31 39 32 49 38 M19 45 C28 42 37 43 45 48" fill="none" stroke="#111" stroke-width="5" stroke-linecap="round"/></svg>
<div class="a" style="left:2116.21px;top:1700.0px;width:68px;height:68px;border-radius:15.5px;overflow:hidden;background:linear-gradient(#1fa5f5,#1a6fe0);box-shadow:0 1px 2px rgba(0,0,0,0.25)"><svg style="left:0;top:0" width="68" height="68" viewBox="0 0 67 67"><path d="M31 15 L51 51 M37 15 L19 50 M13 41 H57" stroke="#fff" stroke-width="5" stroke-linecap="round"/></svg></div>
<div class="a" style="left:2204.48px;top:1700.0px;width:68px;height:68px;border-radius:15.5px;overflow:hidden;background:linear-gradient(#dcdcdc,#a9a9a9);box-shadow:0 1px 2px rgba(0,0,0,0.25)"><svg style="left:0;top:0" width="68" height="68" viewBox="0 0 67 67"><circle cx="33.5" cy="33.5" r="28" fill="#3a3a3a"/><circle cx="33.5" cy="33.5" r="26" fill="none" stroke="#b8b8b8" stroke-width="3" stroke-dasharray="1.2 1.6"/><circle cx="33.5" cy="33.5" r="22" fill="#8c8c8c"/><circle cx="33.5" cy="33.5" r="18" fill="#444"/><circle cx="33.5" cy="33.5" r="14" fill="none" stroke="#9a9a9a" stroke-width="2.5"/><path d="M33.5 33.5 V17 M33.5 33.5 L19 42 M33.5 33.5 L48 42" stroke="#a8a8a8" stroke-width="3.5"/><circle cx="33.5" cy="33.5" r="4" fill="#a8a8a8"/></svg></div>
<div class="a" style="left:2332.5px;top:1700.0px;width:68px;height:68px;border-radius:15.5px;overflow:hidden;background:#2d63f0;box-shadow:0 1px 2px rgba(0,0,0,0.25)"><svg style="left:0;top:0" width="68" height="68" viewBox="0 0 67 67"></svg></div>
<div class="t" style="left:2344.50px;top:1723.85px;font-size:19px;font-weight:700;font-style:normal;font-family:'Liberation Sans';color:#fff;transform:scaleX(0.9033);transform-origin:0 0;">zoom</div>
<div class="a" style="left:2421.0px;top:1700.0px;width:68px;height:68px;border-radius:15.5px;overflow:hidden;background:linear-gradient(#c9c9c9,#9c9c9c);box-shadow:0 1px 2px rgba(0,0,0,0.25)"><svg style="left:0;top:0" width="68" height="68" viewBox="0 0 67 67"></svg></div>
<div class="t" style="left:2437.00px;top:1712.00px;font-size:20px;font-weight:400;font-style:normal;font-family:'Liberation Serif';color:#333;transform:scaleX(1.0452);transform-origin:0 0;">A A</div>
<div class="t" style="left:2437.00px;top:1736.00px;font-size:20px;font-weight:700;font-style:normal;font-family:'Liberation Serif';color:#333;transform:scaleX(1.2227);transform-origin:0 0;">A a</div>
<div class="a" style="left:2510.8px;top:1700.0px;width:68px;height:68px;border-radius:15.5px;overflow:hidden;background:linear-gradient(#e0e0e0,#bdbdbd);box-shadow:0 1px 2px rgba(0,0,0,0.25)"><svg style="left:0;top:0" width="68" height="68" viewBox="0 0 67 67"><rect x="17" y="12" width="33" height="44" rx="5" fill="#2a2a2a"/><circle cx="24.0" cy="24" r="2.8" fill="#ddd"/><circle cx="33.5" cy="24" r="2.8" fill="#ddd"/><circle cx="43.0" cy="24" r="2.8" fill="#ddd"/><circle cx="24.0" cy="32" r="2.8" fill="#ddd"/><circle cx="33.5" cy="32" r="2.8" fill="#ddd"/><circle cx="43.0" cy="32" r="2.8" fill="#ddd"/><circle cx="24.0" cy="40" r="2.8" fill="#ddd"/><circle cx="33.5" cy="40" r="2.8" fill="#ddd"/><circle cx="43.0" cy="40" r="2.8" fill="#ddd"/><rect x="21" y="46" width="19" height="5" rx="2.5" fill="#ddd"/><circle cx="43" cy="48.5" r="2.8" fill="#f29a3a"/></svg></div>
<svg style="left:2636px;top:1694px" width="72" height="76" viewBox="0 0 72 76"><path d="M16 2 H52 L64 14 V40 H16Z" fill="#f4f4f4" stroke="#d8d8d8" stroke-width="1"/><path d="M20 8 H48 M20 14 H50 M20 20 H56" stroke="#c8c8c8" stroke-width="1.2"/><path d="M5 12 Q5 9 8 9 H24 Q27 9 29 12 L31 16 H66 Q70 16 70 20 V26 H1 V16 Q1 12 5 12Z" fill="#4a98e0"/><path d="M1 24 Q1 21 4 21 H67 Q71 21 71 25 V70 Q71 74 67 74 H5 Q1 74 1 70Z" fill="#8acdf7"/><path d="M1 66 H71" stroke="#6fb6ea" stroke-width="1.5"/></svg>
<svg style="left:2729px;top:1693px" width="62" height="80" viewBox="0 0 62 80"><path d="M1 14 L8 74 Q9 79 16 79 H46 Q53 79 54 74 L61 14Z" fill="#e6e7e9"/><path d="M1 14 L61 14 L60 22 L2 22Z" fill="#cfd1d4"/><ellipse cx="31" cy="13" rx="30" ry="6" fill="#d3d5d8"/><path d="M8 12 L16 3 L24 10 L31 2 L38 12 L46 3 L54 12 Z" fill="#f2f2f2" stroke="#8a8a8a" stroke-width="1"/><path d="M22 10 L28 16 L34 9Z" fill="#3a6fd0"/><path d="M38 10 L44 16 L50 8Z" fill="#d0553a"/></svg>
<div class="a" style="left:2302px;top:1697px;width:2px;height:80px;background:#4a4744;"></div>
<div class="a" style="left:2608px;top:1697px;width:2px;height:80px;background:#4a4744;"></div>
<div class="a" style="left:116.1px;top:1778px;width:7px;height:7px;border-radius:50%;background:#1a1010"></div>
<div class="a" style="left:1086.5px;top:1778px;width:7px;height:7px;border-radius:50%;background:#1a1010"></div>
<div class="a" style="left:1174.5px;top:1778px;width:7px;height:7px;border-radius:50%;background:#1a1010"></div>
<div class="a" style="left:1262.5px;top:1778px;width:7px;height:7px;border-radius:50%;background:#1a1010"></div>
<div class="a" style="left:1350.5px;top:1778px;width:7px;height:7px;border-radius:50%;background:#1a1010"></div>
<div class="a" style="left:1438.5px;top:1778px;width:7px;height:7px;border-radius:50%;background:#1a1010"></div>
<div class="a" style="left:1880.5px;top:1778px;width:7px;height:7px;border-radius:50%;background:#1a1010"></div>
<div class="a" style="left:1968.5px;top:1778px;width:7px;height:7px;border-radius:50%;background:#1a1010"></div>
<div class="a" style="left:2056.5px;top:1778px;width:7px;height:7px;border-radius:50%;background:#1a1010"></div>
<div class="a" style="left:2451.5px;top:1778px;width:7px;height:7px;border-radius:50%;background:#1a1010"></div>
</body></html>
